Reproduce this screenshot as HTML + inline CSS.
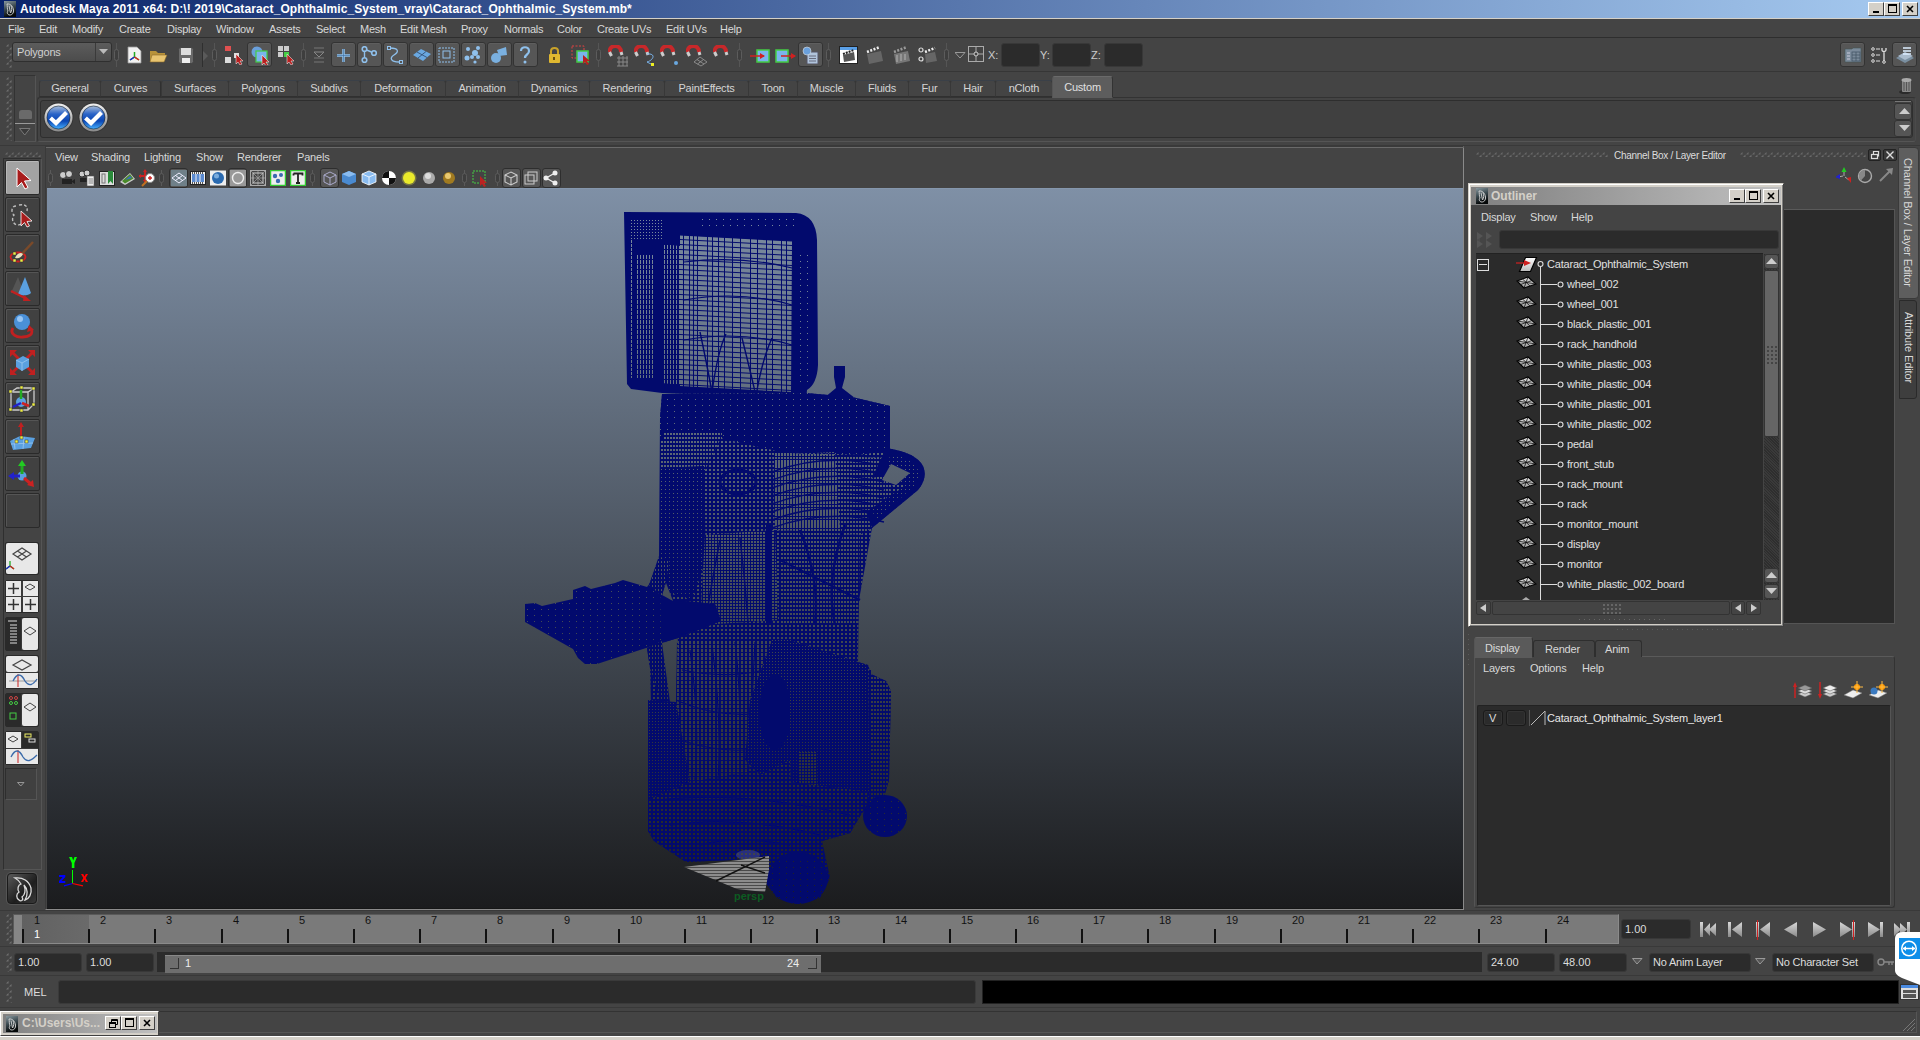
<!DOCTYPE html><html><head><meta charset="utf-8"><style>
html,body{margin:0;padding:0;width:1920px;height:1040px;overflow:hidden;background:#444;}
body{position:relative;font-family:"Liberation Sans",sans-serif;font-size:12px;color:#ddd;}
div{box-sizing:border-box;}
.t{position:absolute;white-space:nowrap;line-height:14px;}
</style></head><body>
<div style="position:absolute;left:0px;top:0px;width:1920px;height:18px;background:linear-gradient(90deg,#0a246a,#a6caf0);"></div>
<svg style="position:absolute;left:4px;top:1px" width="12" height="16" viewBox="0 0 12 16"><defs><linearGradient id="mi1" x1="0" y1="0" x2="0.3" y2="1"><stop offset="0" stop-color="#8a9aa0"/><stop offset="0.5" stop-color="#3c4a50"/><stop offset="1" stop-color="#050808"/></linearGradient></defs><rect width="12" height="16" fill="url(#mi1)"/><path d="M3 3 C6 2.5 9 5 9.5 9 C10 12 8 14 6 14 C3.5 14 2.5 11.5 4 10 C3 8 3.5 5 3 3 Z M5 4.5 L6.5 12 M7 4.5 C8 7 8 10 6.5 12" fill="none" stroke="#d8d8d8" stroke-width="0.9"/><path d="M5.5 11.5 L7.5 12.5 L6 13.5 Z" fill="#000"/></svg>
<div class="t" style="left:20px;top:2px;font-weight:bold;font-size:12px;color:#fff;line-height:14px;letter-spacing:0.1px;">Autodesk Maya 2011 x64: D:\! 2019\Cataract_Ophthalmic_System_vray\Cataract_Ophthalmic_System.mb*</div>
<div style="position:absolute;left:1868px;top:2px;width:16px;height:14px;background:#d4d0c8;border:1px solid;border-color:#fff #404040 #404040 #fff;"><div style="position:absolute;left:4px;top:8px;width:6px;height:2px;background:#000"></div></div>
<div style="position:absolute;left:1884px;top:2px;width:16px;height:14px;background:#d4d0c8;border:1px solid;border-color:#fff #404040 #404040 #fff;"><div style="position:absolute;left:3px;top:1px;width:9px;height:9px;border:1px solid #000;border-top-width:2px"></div></div>
<div style="position:absolute;left:1902px;top:2px;width:16px;height:14px;background:#d4d0c8;border:1px solid;border-color:#fff #404040 #404040 #fff;"><svg width="14" height="12" style="position:absolute;left:0;top:0"><path d="M4 3 L10 9 M10 3 L4 9" stroke="#000" stroke-width="1.6"/></svg></div>
<div style="position:absolute;left:0px;top:18px;width:1920px;height:1px;background:#d4d0c8;"></div>
<div style="position:absolute;left:0px;top:37px;width:1920px;height:1px;background:#2e2e2e;"></div>
<div class="t" style="left:8px;top:22px;color:#d8d8d8;font-size:11px;letter-spacing:-0.25px;">File</div>
<div class="t" style="left:39px;top:22px;color:#d8d8d8;font-size:11px;letter-spacing:-0.25px;">Edit</div>
<div class="t" style="left:72px;top:22px;color:#d8d8d8;font-size:11px;letter-spacing:-0.25px;">Modify</div>
<div class="t" style="left:119px;top:22px;color:#d8d8d8;font-size:11px;letter-spacing:-0.25px;">Create</div>
<div class="t" style="left:167px;top:22px;color:#d8d8d8;font-size:11px;letter-spacing:-0.25px;">Display</div>
<div class="t" style="left:216px;top:22px;color:#d8d8d8;font-size:11px;letter-spacing:-0.25px;">Window</div>
<div class="t" style="left:269px;top:22px;color:#d8d8d8;font-size:11px;letter-spacing:-0.25px;">Assets</div>
<div class="t" style="left:316px;top:22px;color:#d8d8d8;font-size:11px;letter-spacing:-0.25px;">Select</div>
<div class="t" style="left:360px;top:22px;color:#d8d8d8;font-size:11px;letter-spacing:-0.25px;">Mesh</div>
<div class="t" style="left:400px;top:22px;color:#d8d8d8;font-size:11px;letter-spacing:-0.25px;">Edit Mesh</div>
<div class="t" style="left:461px;top:22px;color:#d8d8d8;font-size:11px;letter-spacing:-0.25px;">Proxy</div>
<div class="t" style="left:504px;top:22px;color:#d8d8d8;font-size:11px;letter-spacing:-0.25px;">Normals</div>
<div class="t" style="left:557px;top:22px;color:#d8d8d8;font-size:11px;letter-spacing:-0.25px;">Color</div>
<div class="t" style="left:597px;top:22px;color:#d8d8d8;font-size:11px;letter-spacing:-0.25px;">Create UVs</div>
<div class="t" style="left:666px;top:22px;color:#d8d8d8;font-size:11px;letter-spacing:-0.25px;">Edit UVs</div>
<div class="t" style="left:720px;top:22px;color:#d8d8d8;font-size:11px;letter-spacing:-0.25px;">Help</div>
<svg style="position:absolute;left:6px;top:44px" width="6" height="24"><defs><pattern id="gp2" width="6" height="6" patternUnits="userSpaceOnUse"><path d="M2.5,0 V2.5 H0 Z" fill="#727272"/><path d="M5.5,3 V5.5 H3 Z" fill="#727272"/></pattern></defs><rect width="6" height="24" fill="url(#gp2)"/></svg>
<div style="position:absolute;left:12px;top:42px;width:100px;height:20px;background:linear-gradient(#5c5c5c,#4c4c4c);border:1px solid #2f2f2f;border-radius:3px;"></div>
<div style="position:absolute;left:95px;top:43px;width:1px;height:18px;background:#3a3a3a;"></div>
<div class="t" style="left:17px;top:45px;font-size:11px;color:#d0d0d0;letter-spacing:-0.2px;">Polygons</div>
<svg style="position:absolute;left:99px;top:48px;" width="10" height="8" viewBox="0 0 10 8"><path d="M0 1 L9 1 L4.5 6 Z" fill="#bbb"/></svg>
<div style="position:absolute;left:116px;top:43px;width:1px;height:24px;background:#2f2f2f;border-right:1px solid #555"></div>
<div style="position:absolute;left:114px;top:49px;width:5px;height:12px;border:1px solid #5c5c5c;border-radius:3px;background:#3e3e3e"></div>
<svg style="position:absolute;left:127px;top:46px;" width="15" height="18" viewBox="0 0 15 18"><path d="M1 1 H10 L14 5 V17 H1 Z" fill="#f2f2f2" stroke="#999" stroke-width="0.8"/><path d="M7.5 6 V11 M7.5 11 L3 14 M7.5 11 L12 14" stroke="#2a2" stroke-width="1.5"/><path d="M7.5 11 L3 14" stroke="#22c" stroke-width="1.5"/><path d="M7.5 11 L12 14" stroke="#d22" stroke-width="1.5"/></svg>
<svg style="position:absolute;left:149px;top:48px;" width="19" height="15" viewBox="0 0 19 15"><path d="M1 3 H7 L9 5 H16 V13 H1 Z" fill="#b8923a"/><path d="M3 7 H18 L15 14 H1 Z" fill="#e8c470" stroke="#8a6a2a" stroke-width="0.6"/></svg>
<svg style="position:absolute;left:178px;top:47px;" width="16" height="17" viewBox="0 0 16 17"><rect x="0.5" y="0.5" width="15" height="16" rx="2" fill="#6a6a6a" stroke="#444"/><rect x="3" y="1" width="10" height="7" fill="#ddd"/><rect x="4" y="11" width="8" height="5" fill="#eee"/></svg>
<div style="position:absolute;left:202px;top:43px;width:1px;height:24px;background:#2f2f2f"></div>
<svg style="position:absolute;left:203px;top:51px;" width="6" height="10" viewBox="0 0 6 10"><path d="M0 0 L5 5 L0 10 Z" fill="#5a5a5a"/></svg>
<div style="position:absolute;left:214px;top:43px;width:1px;height:24px;background:#2f2f2f;border-right:1px solid #555"></div>
<div style="position:absolute;left:212px;top:49px;width:5px;height:12px;border:1px solid #5c5c5c;border-radius:3px;background:#3e3e3e"></div>
<svg style="position:absolute;left:225px;top:46px;" width="19" height="19" viewBox="0 0 19 19"><rect x="0" y="0" width="6" height="5" fill="#e05050"/><rect x="0" y="11" width="6" height="6" fill="#ddd"/><rect x="9" y="7" width="5" height="5" fill="#ddd"/><path d="M11 8 L11 18 L13 16 L15 19 L17 18 L15 15 L18 15 Z" fill="#b82020" stroke="#fff" stroke-width="0.5"/></svg>
<div style="position:absolute;left:247px;top:42px;width:25px;height:25px;background:#565656;border:1px solid #333;border-radius:3px;box-shadow:inset 0 1px 0 #5e5e5e"></div>
<svg style="position:absolute;left:251px;top:46px;" width="19" height="19" viewBox="0 0 19 19"><circle cx="6" cy="6" r="5.5" fill="#6aa0dc"/><rect x="5" y="5" width="11" height="11" fill="#7ab4ec" stroke="#4c4" stroke-width="1.2"/><path d="M11 9 L11 19 L13 17 L15 20 L17 19 L15 16 L18 16 Z" fill="#b82020" stroke="#fff" stroke-width="0.5"/></svg>
<svg style="position:absolute;left:278px;top:46px;" width="18" height="19" viewBox="0 0 18 19"><rect x="0" y="0" width="5" height="5" fill="#ccc"/><rect x="6" y="0" width="5" height="5" fill="#ccc"/><rect x="0" y="6" width="5" height="5" fill="#ccc"/><rect x="6" y="6" width="5" height="5" fill="#4c4"/><path d="M9 8 L9 18 L11 16 L13 19 L15 18 L13 15 L16 15 Z" fill="#b82020" stroke="#fff" stroke-width="0.5"/></svg>
<div style="position:absolute;left:303px;top:43px;width:1px;height:24px;background:#2f2f2f;border-right:1px solid #555"></div>
<div style="position:absolute;left:301px;top:49px;width:5px;height:12px;border:1px solid #5c5c5c;border-radius:3px;background:#3e3e3e"></div>
<svg style="position:absolute;left:313px;top:46px;" width="12" height="18" viewBox="0 0 12 18"><path d="M1 2 H11 M1 16 H11 M1 12 H11" stroke="#777" stroke-width="1"/><path d="M1 6 L11 6 L6 11 Z" fill="none" stroke="#888"/></svg>
<div style="position:absolute;left:331px;top:42px;width:25px;height:25px;background:#565656;border:1px solid #333;border-radius:3px;box-shadow:inset 0 1px 0 #5e5e5e"></div>
<div style="position:absolute;left:357px;top:42px;width:25px;height:25px;background:#565656;border:1px solid #333;border-radius:3px;box-shadow:inset 0 1px 0 #5e5e5e"></div>
<div style="position:absolute;left:383px;top:42px;width:25px;height:25px;background:#565656;border:1px solid #333;border-radius:3px;box-shadow:inset 0 1px 0 #5e5e5e"></div>
<div style="position:absolute;left:409px;top:42px;width:25px;height:25px;background:#565656;border:1px solid #333;border-radius:3px;box-shadow:inset 0 1px 0 #5e5e5e"></div>
<div style="position:absolute;left:435px;top:42px;width:25px;height:25px;background:#565656;border:1px solid #333;border-radius:3px;box-shadow:inset 0 1px 0 #5e5e5e"></div>
<div style="position:absolute;left:461px;top:42px;width:25px;height:25px;background:#565656;border:1px solid #333;border-radius:3px;box-shadow:inset 0 1px 0 #5e5e5e"></div>
<div style="position:absolute;left:487px;top:42px;width:25px;height:25px;background:#565656;border:1px solid #333;border-radius:3px;box-shadow:inset 0 1px 0 #5e5e5e"></div>
<div style="position:absolute;left:513px;top:42px;width:25px;height:25px;background:#565656;border:1px solid #333;border-radius:3px;box-shadow:inset 0 1px 0 #5e5e5e"></div>
<svg style="position:absolute;left:335px;top:47px;" width="17" height="17" viewBox="0 0 17 17"><path d="M8.5 2 V15 M2 8.5 H15" stroke="#8fc0ec" stroke-width="2.5"/><path d="M8.5 2 V15 M2 8.5 H15" stroke="#3a6a9a" stroke-width="0.6"/></svg>
<svg style="position:absolute;left:361px;top:46px;" width="17" height="18" viewBox="0 0 17 18"><circle cx="3.5" cy="3" r="2.3" fill="none" stroke="#8fc0ec" stroke-width="1.6"/><circle cx="3.5" cy="14" r="2.3" fill="none" stroke="#8fc0ec" stroke-width="1.6"/><circle cx="13" cy="7" r="2.3" fill="none" stroke="#8fc0ec" stroke-width="1.6"/><path d="M3.5 5.5 V11.5 M5.5 4 L10.5 6" stroke="#8fc0ec" stroke-width="1.4"/></svg>
<svg style="position:absolute;left:387px;top:46px;" width="17" height="18" viewBox="0 0 17 18"><rect x="0.5" y="0.5" width="3" height="3" fill="none" stroke="#8fc0ec"/><rect x="12.5" y="14.5" width="3" height="3" fill="none" stroke="#8fc0ec"/><path d="M3 2 C12 2 12 6 7 9 C2 12 4 16 12 16" fill="none" stroke="#8fc0ec" stroke-width="1.3"/></svg>
<svg style="position:absolute;left:412px;top:48px;" width="20" height="14" viewBox="0 0 20 14"><path d="M1 7 L9 1 L19 6 L11 13 Z" fill="#6aa8e0"/><path d="M5 4 L15 9.5 M14 3.5 L6 10" stroke="#3a5a80" stroke-width="1"/></svg>
<svg style="position:absolute;left:438px;top:46px;" width="18" height="18" viewBox="0 0 18 18"><rect x="1" y="2" width="15" height="14" fill="none" stroke="#8fc0ec" stroke-dasharray="2 1"/><rect x="5" y="5" width="7" height="7" fill="none" stroke="#8fc0ec"/></svg>
<svg style="position:absolute;left:464px;top:46px;" width="18" height="18" viewBox="0 0 18 18"><circle cx="4" cy="3" r="2" fill="#8fc0ec"/><circle cx="14" cy="2" r="2" fill="#8fc0ec"/><circle cx="11" cy="7" r="3" fill="#8fc0ec"/><circle cx="3" cy="12" r="2.5" fill="#8fc0ec"/><circle cx="8" cy="11" r="2" fill="#8fc0ec"/><circle cx="14" cy="11" r="2" fill="#8fc0ec"/><circle cx="11" cy="16" r="1.6" fill="#8fc0ec"/></svg>
<svg style="position:absolute;left:490px;top:46px;" width="18" height="18" viewBox="0 0 18 18"><circle cx="6" cy="12" r="5" fill="#7ab0e0"/><path d="M7 4 L16 1 L17 9 L9 10 Z" fill="#7ab0e0"/></svg>
<svg style="position:absolute;left:519px;top:46px;" width="12" height="18" viewBox="0 0 12 18"><path d="M2 5 C2 0 10 0 10 5 C10 9 6 8 6 12" fill="none" stroke="#8fc0ec" stroke-width="2.2"/><circle cx="6" cy="16" r="1.5" fill="#8fc0ec"/></svg>
<svg style="position:absolute;left:548px;top:46px;" width="13" height="18" viewBox="0 0 13 18"><path d="M3 8 V5 C3 1 10 1 10 5 V8" fill="none" stroke="#c9a22a" stroke-width="2"/><rect x="1" y="8" width="11" height="9" rx="1" fill="#e0b830"/><rect x="5" y="11" width="2" height="3" fill="#6a5010"/></svg>
<svg style="position:absolute;left:571px;top:44px;" width="20" height="21" viewBox="0 0 20 21"><rect x="1" y="2" width="12" height="12" fill="none" stroke="#e04040" stroke-dasharray="2 1.5"/><rect x="6" y="7" width="11" height="11" fill="#7ab4ec" stroke="#4c4" stroke-width="1.5"/><path d="M12 11 L12 20 L14 18 L16 21 L18 20 L16 17 L19 17 Z" fill="#b82020"/></svg>
<div style="position:absolute;left:598px;top:43px;width:1px;height:24px;background:#2f2f2f;border-right:1px solid #555"></div>
<div style="position:absolute;left:596px;top:49px;width:5px;height:12px;border:1px solid #5c5c5c;border-radius:3px;background:#3e3e3e"></div>
<svg style="position:absolute;left:608px;top:45px;" width="21" height="22" viewBox="0 0 21 22"><path d="M1.5 7 C1.5 -1 13 -1 13 7" fill="none" stroke="#c8282a" stroke-width="4"/><path d="M1.5 7 L3.5 11 M13 7 L14 10" stroke="#ccc" stroke-width="3"/><path d="M9 13 H20 M9 17 H20 M9 21 H20 M11 11 V21 M15 11 V21 M19 11 V21" stroke="#888" stroke-width="1"/></svg>
<svg style="position:absolute;left:634px;top:45px;" width="21" height="22" viewBox="0 0 21 22"><path d="M1.5 7 C1.5 -1 13 -1 13 7" fill="none" stroke="#c8282a" stroke-width="4"/><path d="M1.5 7 L3.5 11 M13 7 L14 10" stroke="#ccc" stroke-width="3"/><path d="M13 9 C22 8 20 15 13 17 L19 20" fill="none" stroke="#7ab4ec" stroke-width="1"/><rect x="17" y="18" width="3" height="3" fill="#ee2"/></svg>
<svg style="position:absolute;left:660px;top:45px;" width="21" height="22" viewBox="0 0 21 22"><path d="M1.5 7 C1.5 -1 13 -1 13 7" fill="none" stroke="#c8282a" stroke-width="4"/><path d="M1.5 7 L3.5 11 M13 7 L14 10" stroke="#ccc" stroke-width="3"/><circle cx="16" cy="18" r="2" fill="#6aa8e0"/></svg>
<svg style="position:absolute;left:686px;top:45px;" width="21" height="22" viewBox="0 0 21 22"><path d="M1.5 7 C1.5 -1 13 -1 13 7" fill="none" stroke="#c8282a" stroke-width="4"/><path d="M1.5 7 L3.5 11 M13 7 L14 10" stroke="#ccc" stroke-width="3"/><path d="M8 17 L14 12 L21 17 L15 21 Z M11 14.5 L18 19 M17.5 14.5 L11.5 19" fill="none" stroke="#999" stroke-width="0.8"/></svg>
<svg style="position:absolute;left:713px;top:45px;" width="21" height="22" viewBox="0 0 21 22"><path d="M1.5 7 C1.5 -1 13 -1 13 7" fill="none" stroke="#c8282a" stroke-width="4"/><path d="M1.5 7 L3.5 11 M13 7 L14 10" stroke="#ccc" stroke-width="3"/></svg>
<div style="position:absolute;left:739px;top:43px;width:1px;height:24px;background:#2f2f2f;border-right:1px solid #555"></div>
<div style="position:absolute;left:737px;top:49px;width:5px;height:12px;border:1px solid #5c5c5c;border-radius:3px;background:#3e3e3e"></div>
<svg style="position:absolute;left:750px;top:49px;" width="20" height="14" viewBox="0 0 20 14"><rect x="7" y="1" width="12" height="12" fill="#7ab4ec" stroke="#4c4" stroke-width="1.5"/><path d="M0 7 H14" stroke="#d02020" stroke-width="1.5"/><path d="M10 4 L15 7 L10 10 Z" fill="#d02020"/></svg>
<svg style="position:absolute;left:775px;top:49px;" width="22" height="14" viewBox="0 0 22 14"><rect x="1" y="1" width="12" height="12" fill="#7ab4ec" stroke="#4c4" stroke-width="1.5"/><path d="M6 7 H20" stroke="#d02020" stroke-width="1.5"/><path d="M16 4 L21 7 L16 10 Z" fill="#d02020"/></svg>
<div style="position:absolute;left:798px;top:42px;width:25px;height:25px;background:#565656;border:1px solid #333;border-radius:3px;box-shadow:inset 0 1px 0 #5e5e5e"></div>
<svg style="position:absolute;left:802px;top:46px;" width="17" height="18" viewBox="0 0 17 18"><rect x="5" y="6" width="11" height="12" fill="#b0c4dc" stroke="#556"/><path d="M7 10 H14 M7 12.5 H14 M7 15 H14" stroke="#556" stroke-width="0.8"/><circle cx="5" cy="5" r="4" fill="#6aa0dc" stroke="#ddd" stroke-width="0.6"/></svg>
<div style="position:absolute;left:828px;top:43px;width:1px;height:24px;background:#2f2f2f;border-right:1px solid #555"></div>
<div style="position:absolute;left:826px;top:49px;width:5px;height:12px;border:1px solid #5c5c5c;border-radius:3px;background:#3e3e3e"></div>
<svg style="position:absolute;left:839px;top:46px;" width="19" height="18" viewBox="0 0 19 18"><rect x="0.5" y="0.5" width="18" height="17" fill="#fff" stroke="#222"/><rect x="1" y="1" width="17" height="3" fill="#5aa0e8"/><path d="M4 9 L15 6 L16 14 L5 16 Z" fill="#555"/><path d="M4 8 L15 4" stroke="#222" stroke-width="2" stroke-dasharray="2 1"/></svg>
<svg style="position:absolute;left:866px;top:45px;" width="18" height="20" viewBox="0 0 18 20"><path d="M1 9 L15 6 L17 16 L3 19 Z" fill="#666"/><path d="M1 7 L14 2" stroke="#eee" stroke-width="2.5" stroke-dasharray="2 1.5"/></svg>
<svg style="position:absolute;left:893px;top:45px;" width="18" height="20" viewBox="0 0 18 20"><path d="M1 9 L15 6 L17 16 L3 19 Z" fill="#777"/><path d="M1 7 L14 2" stroke="#999" stroke-width="2.5" stroke-dasharray="2 1.5"/><path d="M4 10 V17 M8 9 V16 M12 9 V15" stroke="#aaa" stroke-width="1.2"/></svg>
<svg style="position:absolute;left:918px;top:45px;" width="20" height="20" viewBox="0 0 20 20"><circle cx="3" cy="5" r="2" fill="none" stroke="#ddd" stroke-width="1.2"/><circle cx="3" cy="14" r="2" fill="none" stroke="#ddd" stroke-width="1.2"/><path d="M7 9 L17 7 L19 16 L8 18 Z" fill="#666"/><path d="M7 7 L17 3" stroke="#eee" stroke-width="2.5" stroke-dasharray="2 1.5"/></svg>
<div style="position:absolute;left:946px;top:43px;width:1px;height:24px;background:#2f2f2f;border-right:1px solid #555"></div>
<div style="position:absolute;left:944px;top:49px;width:5px;height:12px;border:1px solid #5c5c5c;border-radius:3px;background:#3e3e3e"></div>
<svg style="position:absolute;left:955px;top:52px;" width="11" height="7" viewBox="0 0 11 7"><path d="M0 0.5 H10 L5 6 Z" fill="none" stroke="#999"/></svg>
<svg style="position:absolute;left:968px;top:46px;" width="16" height="16" viewBox="0 0 16 16"><rect x="0.5" y="0.5" width="15" height="15" fill="none" stroke="#aaa"/><path d="M8 0 V16 M0 8 H16" stroke="#aaa"/><circle cx="8" cy="8" r="2" fill="#444" stroke="#ccc"/></svg>
<div class="t" style="left:988px;top:48px;font-size:11px;color:#ccc;">X:</div>
<div class="t" style="left:1040px;top:48px;font-size:11px;color:#ccc;">Y:</div>
<div class="t" style="left:1091px;top:48px;font-size:11px;color:#ccc;">Z:</div>
<div style="position:absolute;left:1001px;top:43px;width:39px;height:24px;background:#2b2b2b;border:1px solid #383838;border-radius:3px;"></div>
<div style="position:absolute;left:1052px;top:43px;width:39px;height:24px;background:#2b2b2b;border:1px solid #383838;border-radius:3px;"></div>
<div style="position:absolute;left:1104px;top:43px;width:39px;height:24px;background:#2b2b2b;border:1px solid #383838;border-radius:3px;"></div>
<div style="position:absolute;left:1840px;top:42px;width:25px;height:25px;background:#565656;border:1px solid #333;border-radius:3px;box-shadow:inset 0 1px 0 #5e5e5e"></div>
<svg style="position:absolute;left:1844px;top:47px;" width="18" height="16" viewBox="0 0 18 16"><path d="M1 2 H8 L9 1 H17 V15 H1 Z" fill="#7a8a9a" stroke="#455" stroke-width="0.6"/><path d="M3 6 H6 M3 9 H6 M3 12 H6" stroke="#ccd" stroke-width="1"/><rect x="8" y="5" width="8" height="9" fill="none" stroke="#456" stroke-width="0.8"/><path d="M12 5 V14 M8 8 H16 M8 11 H16" stroke="#456" stroke-width="0.8"/></svg>
<svg style="position:absolute;left:1871px;top:47px;" width="16" height="17" viewBox="0 0 16 17"><circle cx="2" cy="2" r="1.3" fill="none" stroke="#ddd"/><circle cx="2" cy="8" r="1.3" fill="none" stroke="#ddd"/><circle cx="2" cy="14" r="1.3" fill="none" stroke="#ddd"/><path d="M5 2 H9 M5 8 H9 M5 14 H9" stroke="#ddd"/><path d="M13 4 V14 M11 1 V3 C11 5 15 5 15 3 V1" fill="none" stroke="#ddd" stroke-width="1.3"/><circle cx="13" cy="15" r="1.3" fill="none" stroke="#ddd"/></svg>
<div style="position:absolute;left:1892px;top:42px;width:25px;height:25px;background:#565656;border:1px solid #333;border-radius:3px;box-shadow:inset 0 1px 0 #5e5e5e"></div>
<svg style="position:absolute;left:1895px;top:46px;" width="20" height="19" viewBox="0 0 20 19"><path d="M1 12 L10 17 L19 12 L10 7 Z" fill="#7a8fa0"/><path d="M3 10 L10 14 L18 10 L10 6 Z" fill="#aabbcc"/><path d="M8 2 H16 M8 5 H16 M8 8 H16" stroke="#ddeeff" stroke-width="1.5"/></svg>
<div style="position:absolute;left:0px;top:71px;width:1920px;height:1px;background:#363636;"></div>
<svg style="position:absolute;left:6px;top:77px" width="6" height="64"><defs><pattern id="gp3" width="6" height="6" patternUnits="userSpaceOnUse"><path d="M2.5,0 V2.5 H0 Z" fill="#727272"/><path d="M5.5,3 V5.5 H3 Z" fill="#727272"/></pattern></defs><rect width="6" height="64" fill="url(#gp3)"/></svg>
<div style="position:absolute;left:14px;top:75px;width:22px;height:67px;background:#444;border:1px solid;border-color:#333 #555 #555 #333;"></div>
<div style="position:absolute;left:19px;top:110px;width:13px;height:9px;background:#6a6a6a;border-radius:3px 3px 1px 1px;"></div>
<div style="position:absolute;left:15px;top:123px;width:20px;height:1px;background:#9a9a9a;"></div>
<svg style="position:absolute;left:19px;top:128px;" width="12" height="8" viewBox="0 0 12 8"><path d="M0.5 0.5 H11 L5.75 7 Z" fill="#3a3a3a" stroke="#7a7a7a"/></svg>
<div style="position:absolute;left:37px;top:97px;width:1879px;height:45px;background:#444;border:1px solid;border-color:#333 #4a4a4a #555 #333;border-radius:3px;"></div>
<div style="position:absolute;left:40px;top:100px;width:1873px;height:38px;background:#404040;border:1px solid #2e2e2e;border-radius:3px;"></div>
<div style="position:absolute;left:39px;top:80px;width:62px;height:17px;background:#444;border:1px solid;border-color:#3a4048 #303030 #303030 #383838;border-radius:3px 3px 0 0;"></div>
<div class="t" style="left:39px;top:81px;width:62px;text-align:center;font-size:11px;color:#d4d4d4;letter-spacing:-0.2px;">General</div>
<div style="position:absolute;left:100px;top:80px;width:61px;height:17px;background:#444;border:1px solid;border-color:#3a4048 #303030 #303030 #383838;border-radius:3px 3px 0 0;"></div>
<div class="t" style="left:100px;top:81px;width:61px;text-align:center;font-size:11px;color:#d4d4d4;letter-spacing:-0.2px;">Curves</div>
<div style="position:absolute;left:161px;top:80px;width:68px;height:17px;background:#444;border:1px solid;border-color:#3a4048 #303030 #303030 #383838;border-radius:3px 3px 0 0;"></div>
<div class="t" style="left:161px;top:81px;width:68px;text-align:center;font-size:11px;color:#d4d4d4;letter-spacing:-0.2px;">Surfaces</div>
<div style="position:absolute;left:228px;top:80px;width:70px;height:17px;background:#444;border:1px solid;border-color:#3a4048 #303030 #303030 #383838;border-radius:3px 3px 0 0;"></div>
<div class="t" style="left:228px;top:81px;width:70px;text-align:center;font-size:11px;color:#d4d4d4;letter-spacing:-0.2px;">Polygons</div>
<div style="position:absolute;left:297px;top:80px;width:64px;height:17px;background:#444;border:1px solid;border-color:#3a4048 #303030 #303030 #383838;border-radius:3px 3px 0 0;"></div>
<div class="t" style="left:297px;top:81px;width:64px;text-align:center;font-size:11px;color:#d4d4d4;letter-spacing:-0.2px;">Subdivs</div>
<div style="position:absolute;left:360px;top:80px;width:86px;height:17px;background:#444;border:1px solid;border-color:#3a4048 #303030 #303030 #383838;border-radius:3px 3px 0 0;"></div>
<div class="t" style="left:360px;top:81px;width:86px;text-align:center;font-size:11px;color:#d4d4d4;letter-spacing:-0.2px;">Deformation</div>
<div style="position:absolute;left:445px;top:80px;width:74px;height:17px;background:#444;border:1px solid;border-color:#3a4048 #303030 #303030 #383838;border-radius:3px 3px 0 0;"></div>
<div class="t" style="left:445px;top:81px;width:74px;text-align:center;font-size:11px;color:#d4d4d4;letter-spacing:-0.2px;">Animation</div>
<div style="position:absolute;left:518px;top:80px;width:72px;height:17px;background:#444;border:1px solid;border-color:#3a4048 #303030 #303030 #383838;border-radius:3px 3px 0 0;"></div>
<div class="t" style="left:518px;top:81px;width:72px;text-align:center;font-size:11px;color:#d4d4d4;letter-spacing:-0.2px;">Dynamics</div>
<div style="position:absolute;left:589px;top:80px;width:76px;height:17px;background:#444;border:1px solid;border-color:#3a4048 #303030 #303030 #383838;border-radius:3px 3px 0 0;"></div>
<div class="t" style="left:589px;top:81px;width:76px;text-align:center;font-size:11px;color:#d4d4d4;letter-spacing:-0.2px;">Rendering</div>
<div style="position:absolute;left:664px;top:80px;width:85px;height:17px;background:#444;border:1px solid;border-color:#3a4048 #303030 #303030 #383838;border-radius:3px 3px 0 0;"></div>
<div class="t" style="left:664px;top:81px;width:85px;text-align:center;font-size:11px;color:#d4d4d4;letter-spacing:-0.2px;">PaintEffects</div>
<div style="position:absolute;left:748px;top:80px;width:50px;height:17px;background:#444;border:1px solid;border-color:#3a4048 #303030 #303030 #383838;border-radius:3px 3px 0 0;"></div>
<div class="t" style="left:748px;top:81px;width:50px;text-align:center;font-size:11px;color:#d4d4d4;letter-spacing:-0.2px;">Toon</div>
<div style="position:absolute;left:797px;top:80px;width:59px;height:17px;background:#444;border:1px solid;border-color:#3a4048 #303030 #303030 #383838;border-radius:3px 3px 0 0;"></div>
<div class="t" style="left:797px;top:81px;width:59px;text-align:center;font-size:11px;color:#d4d4d4;letter-spacing:-0.2px;">Muscle</div>
<div style="position:absolute;left:855px;top:80px;width:54px;height:17px;background:#444;border:1px solid;border-color:#3a4048 #303030 #303030 #383838;border-radius:3px 3px 0 0;"></div>
<div class="t" style="left:855px;top:81px;width:54px;text-align:center;font-size:11px;color:#d4d4d4;letter-spacing:-0.2px;">Fluids</div>
<div style="position:absolute;left:908px;top:80px;width:43px;height:17px;background:#444;border:1px solid;border-color:#3a4048 #303030 #303030 #383838;border-radius:3px 3px 0 0;"></div>
<div class="t" style="left:908px;top:81px;width:43px;text-align:center;font-size:11px;color:#d4d4d4;letter-spacing:-0.2px;">Fur</div>
<div style="position:absolute;left:950px;top:80px;width:46px;height:17px;background:#444;border:1px solid;border-color:#3a4048 #303030 #303030 #383838;border-radius:3px 3px 0 0;"></div>
<div class="t" style="left:950px;top:81px;width:46px;text-align:center;font-size:11px;color:#d4d4d4;letter-spacing:-0.2px;">Hair</div>
<div style="position:absolute;left:995px;top:80px;width:58px;height:17px;background:#444;border:1px solid;border-color:#3a4048 #303030 #303030 #383838;border-radius:3px 3px 0 0;"></div>
<div class="t" style="left:995px;top:81px;width:58px;text-align:center;font-size:11px;color:#d4d4d4;letter-spacing:-0.2px;">nCloth</div>
<div style="position:absolute;left:1052px;top:76px;width:61px;height:22px;background:#5d5d5d;border:1px solid;border-color:#6a6a6a #333 #5d5d5d #555;border-radius:3px 3px 0 0;"></div>
<div class="t" style="left:1052px;top:80px;width:61px;text-align:center;font-size:11px;color:#e0e0e0;letter-spacing:-0.2px;">Custom</div>
<svg style="position:absolute;left:43px;top:102px;" width="32" height="32" viewBox="0 0 32 32"><defs><linearGradient id="cgl" x1="0" y1="0" x2="0" y2="1"><stop offset="0" stop-color="#a8bcd8"/><stop offset="0.35" stop-color="#2a64c8"/><stop offset="0.65" stop-color="#0a46b4"/><stop offset="1" stop-color="#48b0ff"/></linearGradient><linearGradient id="cgr" x1="0" y1="0" x2="0" y2="1"><stop offset="0" stop-color="#f0f0f0"/><stop offset="1" stop-color="#8a8a8a"/></linearGradient></defs><circle cx="15.5" cy="15.5" r="15" fill="#333"/><circle cx="15.5" cy="15.5" r="14" fill="url(#cgr)"/><circle cx="15.5" cy="15.5" r="11.5" fill="url(#cgl)" stroke="#123" stroke-width="0.6"/><path d="M7.5 16 L13 21 L23.5 10.5" fill="none" stroke="#fff" stroke-width="4.2" stroke-linejoin="miter"/></svg>
<svg style="position:absolute;left:78px;top:102px;" width="32" height="32" viewBox="0 0 32 32"><defs><linearGradient id="cgl" x1="0" y1="0" x2="0" y2="1"><stop offset="0" stop-color="#a8bcd8"/><stop offset="0.35" stop-color="#2a64c8"/><stop offset="0.65" stop-color="#0a46b4"/><stop offset="1" stop-color="#48b0ff"/></linearGradient><linearGradient id="cgr" x1="0" y1="0" x2="0" y2="1"><stop offset="0" stop-color="#f0f0f0"/><stop offset="1" stop-color="#8a8a8a"/></linearGradient></defs><circle cx="15.5" cy="15.5" r="15" fill="#333"/><circle cx="15.5" cy="15.5" r="14" fill="url(#cgr)"/><circle cx="15.5" cy="15.5" r="11.5" fill="url(#cgl)" stroke="#123" stroke-width="0.6"/><path d="M7.5 16 L13 21 L23.5 10.5" fill="none" stroke="#fff" stroke-width="4.2" stroke-linejoin="miter"/></svg>
<svg style="position:absolute;left:1896px;top:76px;" width="20" height="18" viewBox="0 0 20 18"><ellipse cx="9" cy="16" rx="6" ry="2" fill="#2a2a2a"/><rect x="6" y="4" width="9" height="12" rx="1" fill="#888"/><path d="M8 5 V15 M10.5 5 V15 M13 5 V15" stroke="#555" stroke-width="1"/><ellipse cx="10.5" cy="4" rx="5" ry="2" fill="#aaa"/></svg>
<div style="position:absolute;left:1894px;top:103px;width:18px;height:17px;background:#555;border:1px solid #333;border-radius:3px;"></div>
<svg style="position:absolute;left:1899px;top:108px;" width="11" height="7" viewBox="0 0 11 7"><path d="M0 6 L5.5 0 L11 6 Z" fill="#ccc"/></svg>
<div style="position:absolute;left:1894px;top:120px;width:18px;height:17px;background:#555;border:1px solid #333;border-radius:3px;"></div>
<svg style="position:absolute;left:1899px;top:125px;" width="11" height="7" viewBox="0 0 11 7"><path d="M0 0 L5.5 6 L11 0 Z" fill="#ccc"/></svg>
<div style="position:absolute;left:1895px;top:101px;width:16px;height:1px;background:#777;"></div>
<div style="position:absolute;left:0px;top:145px;width:1920px;height:1px;background:#393939;"></div>
<svg style="position:absolute;left:5px;top:152px" width="36" height="5"><defs><pattern id="gp4" width="6" height="5" patternUnits="userSpaceOnUse"><path d="M2.5,0 V2.5 H0 Z" fill="#6a6a6a"/><path d="M5.5,2.5 V5 H3 Z" fill="#6a6a6a"/></pattern></defs><rect width="36" height="5" fill="url(#gp4)"/></svg>
<div style="position:absolute;left:3px;top:158px;width:39px;height:712px;background:#444;border:1px solid;border-color:#2f2f2f #555 #555 #2f2f2f;"></div>
<div style="position:absolute;left:5px;top:160px;width:35px;height:35px;background:#a3a3a3;border:1px solid;border-color:#2a2a2a #2a2a2a #2a2a2a #2a2a2a;border-radius:2px;box-shadow:inset 1px 1px 0 #b8b8b8;"></div>
<svg style="position:absolute;left:5px;top:160px;" width="35" height="35" viewBox="0 0 35 35"><path d="M12 8 L12 27 L16.5 22.5 L20 29 L23 27.5 L19.5 21 L26 20.5 Z" fill="#a81c1c" stroke="#fff" stroke-width="1"/></svg>
<div style="position:absolute;left:5px;top:197px;width:35px;height:35px;background:#414141;border:1px solid;border-color:#2a2a2a #2a2a2a #2a2a2a #2a2a2a;border-radius:2px;box-shadow:inset 1px 1px 0 #555;"></div>
<svg style="position:absolute;left:5px;top:197px;" width="35" height="35" viewBox="0 0 35 35"><path d="M11 9 C6 9 6 16 9 18 C6 22 8 27 12 28 C16 28 18 26 18 26 M14 8 C20 7 23 9 22 14" fill="none" stroke="#bbb" stroke-width="1.4" stroke-dasharray="3 2"/><path d="M16 14 L16 29 L19.5 25.5 L22 30 L24.5 29 L22 24.5 L27 24 Z" fill="#a81c1c" stroke="#fff" stroke-width="0.8"/></svg>
<div style="position:absolute;left:5px;top:234px;width:35px;height:35px;background:#414141;border:1px solid;border-color:#2a2a2a #2a2a2a #2a2a2a #2a2a2a;border-radius:2px;box-shadow:inset 1px 1px 0 #555;"></div>
<svg style="position:absolute;left:5px;top:234px;" width="35" height="35" viewBox="0 0 35 35"><ellipse cx="13" cy="23" rx="7.5" ry="4.5" fill="none" stroke="#d02020" stroke-width="1.8"/><path d="M14 23 L28 8" stroke="#7a4a2a" stroke-width="2.5"/><path d="M10 24 C12 19 16 18 18 20 C16 24 13 25 10 24Z" fill="#e8e0c0"/><rect x="8" y="18" width="3" height="3" fill="#ee4" stroke="#333" stroke-width="0.5"/><rect x="8" y="25" width="3" height="3" fill="#ee4" stroke="#333" stroke-width="0.5"/><rect x="15" y="25" width="3" height="3" fill="#ee4" stroke="#333" stroke-width="0.5"/></svg>
<div style="position:absolute;left:5px;top:271px;width:35px;height:35px;background:#414141;border:1px solid;border-color:#2a2a2a #2a2a2a #2a2a2a #2a2a2a;border-radius:2px;box-shadow:inset 1px 1px 0 #555;"></div>
<svg style="position:absolute;left:5px;top:271px;" width="35" height="35" viewBox="0 0 35 35"><path d="M6 22 L13 6 L19 22 Z" fill="#555"/><path d="M13 23 L20 6 L26 22 C24 25 15 25 13 23Z" fill="#5aa0e0"/><path d="M6 20 L22 28" stroke="#c02020" stroke-width="2.5"/><path d="M19 24 L26 30 L18 30 Z" fill="#c02020"/></svg>
<div style="position:absolute;left:5px;top:308px;width:35px;height:35px;background:#414141;border:1px solid;border-color:#2a2a2a #2a2a2a #2a2a2a #2a2a2a;border-radius:2px;box-shadow:inset 1px 1px 0 #555;"></div>
<svg style="position:absolute;left:5px;top:308px;" width="35" height="35" viewBox="0 0 35 35"><circle cx="17" cy="14" r="8" fill="#4a90d8"/><circle cx="15" cy="11" r="3" fill="#b8dcff" opacity="0.7"/><path d="M8 20 C4 26 12 30 18 29 C24 29 29 26 26 21" fill="none" stroke="#c02020" stroke-width="2.8"/><path d="M24 17 L29 22 L22 24 Z" fill="#c02020"/></svg>
<div style="position:absolute;left:5px;top:345px;width:35px;height:35px;background:#414141;border:1px solid;border-color:#2a2a2a #2a2a2a #2a2a2a #2a2a2a;border-radius:2px;box-shadow:inset 1px 1px 0 #555;"></div>
<svg style="position:absolute;left:5px;top:345px;" width="35" height="35" viewBox="0 0 35 35"><path d="M6 6 L29 29 M29 6 L6 29" stroke="#c02020" stroke-width="2.8"/><path d="M5 5 L12 5 L5 12Z M30 5 L23 5 L30 12Z M5 30 L12 30 L5 23Z M30 30 L23 30 L30 23Z" fill="#c02020"/><path d="M11 15 L18 11 L24 14 L24 22 L17 26 L11 22 Z" fill="#5aa0e0"/><path d="M11 15 L17 18 L24 14 M17 18 V26" stroke="#9cc8f0" stroke-width="0.8" fill="none"/></svg>
<div style="position:absolute;left:5px;top:382px;width:35px;height:35px;background:#414141;border:1px solid;border-color:#2a2a2a #2a2a2a #2a2a2a #2a2a2a;border-radius:2px;box-shadow:inset 1px 1px 0 #555;"></div>
<svg style="position:absolute;left:5px;top:382px;" width="35" height="35" viewBox="0 0 35 35"><path d="M6 10 L12 6 L29 6 L29 22 L23 28 L6 28 Z M6 10 L23 10 L29 6 M23 10 V28" fill="none" stroke="#ccc" stroke-width="1.3"/><circle cx="16" cy="20" r="5" fill="#5aa0e0"/><path d="M16 17 V8" stroke="#2a2" stroke-width="2.5"/><path d="M16 21 L8 25" stroke="#22c" stroke-width="2.5"/><path d="M17 21 L24 24" stroke="#c22" stroke-width="2.5"/><g fill="#ee4" stroke="#333" stroke-width="0.5"><rect x="4" y="8" width="3" height="3"/><rect x="27" y="5" width="3" height="3"/><rect x="4" y="26" width="3" height="3"/><rect x="27" y="21" width="3" height="3"/><rect x="15" y="4" width="3" height="3"/><rect x="15" y="27" width="3" height="3"/></g></svg>
<div style="position:absolute;left:5px;top:419px;width:35px;height:35px;background:#414141;border:1px solid;border-color:#2a2a2a #2a2a2a #2a2a2a #2a2a2a;border-radius:2px;box-shadow:inset 1px 1px 0 #555;"></div>
<svg style="position:absolute;left:5px;top:419px;" width="35" height="35" viewBox="0 0 35 35"><path d="M5 22 L15 17 L30 19 L26 29 L8 31 Z" fill="#5aa0e0"/><path d="M9 20 L10 30 M19 18 L18 30 M6 25 L28 24" stroke="#9cc8f0" stroke-width="0.8"/><path d="M16 18 V6" stroke="#c02020" stroke-width="2"/><path d="M13 8 L16 3 L19 8 Z" fill="#c02020"/><g fill="#ee4" stroke="#333" stroke-width="0.5"><rect x="15" y="17" width="3" height="3"/><rect x="10" y="21" width="3" height="3"/><rect x="20" y="21" width="3" height="3"/></g></svg>
<div style="position:absolute;left:5px;top:456px;width:35px;height:35px;background:#414141;border:1px solid;border-color:#2a2a2a #2a2a2a #2a2a2a #2a2a2a;border-radius:2px;box-shadow:inset 1px 1px 0 #555;"></div>
<svg style="position:absolute;left:5px;top:456px;" width="35" height="35" viewBox="0 0 35 35"><circle cx="17" cy="20" r="4.5" fill="#5aa0e0"/><path d="M17 18 V8" stroke="#2a2" stroke-width="3"/><path d="M13 10 L17 4 L21 10Z" fill="#2c2"/><path d="M15 20 L7 20" stroke="#22c" stroke-width="3"/><path d="M9 16 L3 20 L9 24Z" fill="#22c"/><path d="M19 22 L26 28" stroke="#c22" stroke-width="3"/><path d="M22 29 L29 31 L28 24Z" fill="#c22"/></svg>
<div style="position:absolute;left:5px;top:493px;width:35px;height:35px;background:#414141;border:1px solid;border-color:#2a2a2a #2a2a2a #2a2a2a #2a2a2a;border-radius:2px;box-shadow:inset 1px 1px 0 #555;"></div>
<div style="position:absolute;left:5px;top:542px;width:34px;height:33px;background:#3a3a3a;border:1px solid #2a2a2a;border-radius:2px;"></div>
<svg style="position:absolute;left:5px;top:542px;" width="34" height="33" viewBox="0 0 34 33"><rect x="1" y="1" width="32" height="31" rx="2" fill="#e8e8e8"/><path d="M8 12 L17 6 L26 12 L17 18 Z M12.5 9 L21.5 15 M21.5 9 L12.5 15" fill="none" stroke="#444" stroke-width="1.2"/><path d="M5 24 V19 M5 24 L9 27 M5 24 L1 27" stroke="#2a2" stroke-width="1.3"/><path d="M5 24 L9 27" stroke="#c22" stroke-width="1.3"/><path d="M5 24 L1 27" stroke="#22c" stroke-width="1.3"/></svg>
<div style="position:absolute;left:5px;top:580px;width:34px;height:33px;background:#3a3a3a;border:1px solid #2a2a2a;border-radius:2px;"></div>
<svg style="position:absolute;left:5px;top:580px;" width="34" height="33" viewBox="0 0 34 33"><rect x="1" y="1" width="15" height="15" fill="#e8e8e8"/><rect x="18" y="1" width="15" height="15" fill="#e8e8e8"/><rect x="1" y="17" width="15" height="15" fill="#e8e8e8"/><rect x="18" y="17" width="15" height="15" fill="#e8e8e8"/><path d="M8.5 3 V14 M3 8.5 H14 M8.5 19 V30 M3 24.5 H14 M25.5 19 V30 M20 24.5 H31" stroke="#333" stroke-width="1.5"/><path d="M20 7 L25 4 L30 7 L25 10 Z" fill="none" stroke="#444"/></svg>
<div style="position:absolute;left:5px;top:617px;width:34px;height:34px;background:#3a3a3a;border:1px solid #2a2a2a;border-radius:2px;"></div>
<svg style="position:absolute;left:5px;top:617px;" width="34" height="34" viewBox="0 0 34 34"><rect x="1" y="1" width="15" height="32" fill="#2a2a2a"/><path d="M3 4 H12 M5 8 H12 M5 11 H12 M5 14 H12 M5 17 H12 M5 20 H12 M5 23 H12 M5 26 H12" stroke="#ddd" stroke-width="1"/><rect x="17" y="1" width="16" height="32" rx="2" fill="#e8e8e8"/><path d="M19 14 L25 10 L31 14 L25 18 Z" fill="none" stroke="#444"/></svg>
<div style="position:absolute;left:5px;top:655px;width:34px;height:34px;background:#3a3a3a;border:1px solid #2a2a2a;border-radius:2px;"></div>
<svg style="position:absolute;left:5px;top:655px;" width="34" height="34" viewBox="0 0 34 34"><rect x="1" y="1" width="32" height="16" rx="2" fill="#e8e8e8"/><path d="M8 10 L17 5 L26 10 L17 15 Z" fill="none" stroke="#444" stroke-width="1.2"/><rect x="1" y="18" width="32" height="15" fill="#e8e8e8"/><path d="M4 26 H32" stroke="#888" stroke-width="0.8"/><path d="M13 19 V32" stroke="#c22" stroke-width="1"/><path d="M8 26 C12 18 16 18 20 26 C24 32 28 30 32 24" fill="none" stroke="#3a6aaa" stroke-width="1.3"/></svg>
<div style="position:absolute;left:5px;top:693px;width:34px;height:34px;background:#3a3a3a;border:1px solid #2a2a2a;border-radius:2px;"></div>
<svg style="position:absolute;left:5px;top:693px;" width="34" height="34" viewBox="0 0 34 34"><rect x="1" y="1" width="15" height="32" fill="#2a2a2a"/><g fill="none" stroke="#c44"><circle cx="6" cy="5" r="1.5"/><circle cx="11" cy="5" r="1.5"/></g><g fill="none" stroke="#4c4"><circle cx="6" cy="10" r="1.5"/><circle cx="11" cy="10" r="1.5"/><rect x="5" y="20" width="6" height="6"/></g><rect x="17" y="1" width="16" height="32" rx="2" fill="#e8e8e8"/><path d="M19 14 L25 10 L31 14 L25 18 Z" fill="none" stroke="#444"/></svg>
<div style="position:absolute;left:5px;top:731px;width:34px;height:34px;background:#3a3a3a;border:1px solid #2a2a2a;border-radius:2px;"></div>
<svg style="position:absolute;left:5px;top:731px;" width="34" height="34" viewBox="0 0 34 34"><rect x="1" y="1" width="15" height="16" fill="#e8e8e8"/><path d="M3 8 L8 5 L13 8 L8 11 Z" fill="none" stroke="#444"/><rect x="17" y="1" width="16" height="16" fill="#2a2a2a"/><rect x="20" y="3" width="6" height="3" fill="none" stroke="#ee6"/><rect x="24" y="8" width="6" height="3" fill="none" stroke="#ddd"/><rect x="1" y="18" width="32" height="15" fill="#e8e8e8"/><path d="M13 19 V32" stroke="#c22"/><path d="M6 26 C10 18 14 18 18 26 C22 32 26 30 32 24" fill="none" stroke="#3a6aaa" stroke-width="1.3"/></svg>
<div style="position:absolute;left:5px;top:768px;width:32px;height:32px;background:#404040;border:1px solid;border-color:#2e2e2e #555 #555 #2e2e2e;"></div>
<svg style="position:absolute;left:17px;top:782px;" width="8" height="5" viewBox="0 0 8 5"><path d="M0.5 0.5 H7 L3.75 4 Z" fill="#444" stroke="#aaa" stroke-width="0.8"/></svg>
<div style="position:absolute;left:7px;top:873px;width:30px;height:31px;background:linear-gradient(135deg,#5a5a5a,#1e1e1e 60%,#3a3a3a);border:1px solid #1a1a1a;border-radius:4px;box-shadow:0 0 0 1px #555;"></div>
<svg style="position:absolute;left:7px;top:873px;" width="30" height="31" viewBox="0 0 30 31"><path d="M8 5 C16 4 22 8 24 15 C25 21 22 26 18 27 C21 22 21 16 17 12 C19 17 18 22 15 24 C17 27 14 29 12 27 C9 25 9 21 12 19 C10 16 11 12 14 11 C12 8 10 6 8 5 Z" fill="none" stroke="#ddd" stroke-width="1.3"/></svg>
<div style="position:absolute;left:45px;top:146px;width:1419px;height:764px;background:#444;border:1px solid;border-color:#3a3a3a #8a8a8a #8a8a8a #3a3a3a;"></div>
<div style="position:absolute;left:46px;top:147px;width:1418px;height:1px;background:#6a6a6a;"></div>
<div class="t" style="left:55px;top:150px;font-size:11px;color:#d8d8d8;letter-spacing:-0.2px;">View</div>
<div class="t" style="left:91px;top:150px;font-size:11px;color:#d8d8d8;letter-spacing:-0.2px;">Shading</div>
<div class="t" style="left:144px;top:150px;font-size:11px;color:#d8d8d8;letter-spacing:-0.2px;">Lighting</div>
<div class="t" style="left:196px;top:150px;font-size:11px;color:#d8d8d8;letter-spacing:-0.2px;">Show</div>
<div class="t" style="left:237px;top:150px;font-size:11px;color:#d8d8d8;letter-spacing:-0.2px;">Renderer</div>
<div class="t" style="left:297px;top:150px;font-size:11px;color:#d8d8d8;letter-spacing:-0.2px;">Panels</div>
<div style="position:absolute;left:50px;top:170px;width:1px;height:16px;background:#2c2c2c;border-right:1px solid #5a5a5a"></div>
<div style="position:absolute;left:48px;top:173px;width:5px;height:10px;border:1px solid #5a5a5a;border-radius:3px;background:#3e3e3e"></div>
<svg style="position:absolute;left:58px;top:169px;" width="18" height="18" viewBox="0 0 18 18"><circle cx="5" cy="6" r="3.5" fill="#ccc" stroke="#333"/><circle cx="11" cy="5" r="3.5" fill="#ccc" stroke="#333"/><path d="M4 10 H14 V15 H4 Z M14 12 L17 10 V15 L14 13" fill="#222"/></svg>
<svg style="position:absolute;left:78px;top:169px;" width="17" height="18" viewBox="0 0 17 18"><circle cx="4" cy="5" r="3" fill="#ccc" stroke="#333"/><circle cx="9" cy="4" r="3" fill="#ccc" stroke="#333"/><path d="M2 9 H9 V13 H2Z" fill="#222"/><rect x="9" y="7" width="7" height="10" fill="#eee" stroke="#555" stroke-width="0.6"/><path d="M10.5 10 H15 M10.5 12 H15 M10.5 14 H15" stroke="#555" stroke-width="0.7"/></svg>
<svg style="position:absolute;left:99px;top:170px;" width="16" height="16" viewBox="0 0 16 16"><rect x="0.5" y="1.5" width="15" height="14" fill="#ddd" stroke="#222"/><rect x="3" y="4" width="3" height="9" fill="none" stroke="#777"/><path d="M9 1 H14 V14 L11.5 11 L9 14 Z" fill="#2a8a3a"/></svg>
<svg style="position:absolute;left:119px;top:170px;" width="17" height="16" viewBox="0 0 17 16"><path d="M1 12 L11 3 L16 9 L6 15 Z" fill="#ccc"/><path d="M3 11 L11 4 L14.5 8.5 L6 13.5 Z" fill="#4a8a2a"/><path d="M6 10 L11 6 L13 8 Z" fill="#3a6ac0"/></svg>
<svg style="position:absolute;left:139px;top:169px;" width="17" height="18" viewBox="0 0 17 18"><path d="M6 1 V13 M0 7 H12" stroke="#c22" stroke-width="1.8"/><path d="M4 3 L6 0 L8 3 M4 11 L6 14 L8 11 M2 5 L-1 7 L2 9 M10 5 L13 7 L10 9" fill="#c22"/><circle cx="11" cy="9" r="4.5" fill="#fff" stroke="#888"/><path d="M11 7 V11 M9 9 H13" stroke="#c22" stroke-width="1.4"/><path d="M8 12 L3 17" stroke="#c07020" stroke-width="2"/></svg>
<div style="position:absolute;left:161px;top:170px;width:1px;height:16px;background:#2c2c2c;border-right:1px solid #5a5a5a"></div>
<div style="position:absolute;left:159px;top:173px;width:5px;height:10px;border:1px solid #5a5a5a;border-radius:3px;background:#3e3e3e"></div>
<div style="position:absolute;left:169px;top:168px;width:19px;height:20px;background:#565656;border:1px solid #2e2e2e;border-radius:3px"></div>
<svg style="position:absolute;left:171px;top:170px;" width="16" height="16" viewBox="0 0 16 16"><rect x="0" y="0" width="16" height="16" fill="#8ab" opacity="0.5"/><path d="M1 8 L8 3 L15 8 L8 13 Z M4.5 5.5 L11.5 10.5 M11.5 5.5 L4.5 10.5" fill="none" stroke="#eef" stroke-width="1"/></svg>
<svg style="position:absolute;left:190px;top:170px;" width="16" height="16" viewBox="0 0 16 16"><rect x="0.5" y="1.5" width="15" height="13" fill="#eee" stroke="#222"/><rect x="2" y="4" width="12" height="8" fill="#5a8ad0"/><path d="M2 3 H14 M2 13 H14" stroke="#222" stroke-width="1.4" stroke-dasharray="1 1"/><path d="M6 4 V12 M10 4 V12" stroke="#eee"/></svg>
<svg style="position:absolute;left:210px;top:170px;" width="16" height="16" viewBox="0 0 16 16"><rect x="0" y="0.5" width="16" height="15" fill="#eee"/><circle cx="8" cy="8" r="6" fill="#2a6ab0"/><circle cx="6.5" cy="6" r="2.5" fill="#9cc8f0" opacity="0.7"/></svg>
<div style="position:absolute;left:228px;top:168px;width:19px;height:20px;background:#565656;border:1px solid #2e2e2e;border-radius:3px"></div>
<svg style="position:absolute;left:230px;top:170px;" width="16" height="16" viewBox="0 0 16 16"><rect x="0" y="0" width="16" height="16" fill="#999"/><circle cx="8" cy="8" r="5.5" fill="none" stroke="#eee" stroke-width="1.4"/></svg>
<svg style="position:absolute;left:250px;top:170px;" width="16" height="16" viewBox="0 0 16 16"><rect x="0.5" y="0.5" width="15" height="15" fill="#444" stroke="#aaa"/><path d="M1 1 L15 15 M15 1 L1 15 M8 1 V15 M1 8 H15" stroke="#999" stroke-width="0.8"/><path d="M3 3 H13 V13 H3Z" fill="none" stroke="#ccc"/></svg>
<svg style="position:absolute;left:270px;top:170px;" width="16" height="16" viewBox="0 0 16 16"><rect x="0.5" y="0.5" width="15" height="15" fill="#eee" stroke="#3c3" stroke-width="1.5"/><circle cx="5" cy="6" r="2.2" fill="#3a6ab0"/><circle cx="11" cy="5" r="2" fill="#3a6ab0"/><circle cx="8" cy="11" r="2.2" fill="#3a6ab0"/></svg>
<svg style="position:absolute;left:290px;top:170px;" width="16" height="16" viewBox="0 0 16 16"><rect x="0.5" y="0.5" width="15" height="15" fill="#eee" stroke="#3c3" stroke-width="1.5"/><path d="M3.5 3.5 H12.5 V5.5 M3.5 3.5 V5.5 M8 3.5 V13 M6 13 H10" fill="none" stroke="#222" stroke-width="1.8"/></svg>
<div style="position:absolute;left:312px;top:170px;width:1px;height:16px;background:#2c2c2c;border-right:1px solid #5a5a5a"></div>
<div style="position:absolute;left:310px;top:173px;width:5px;height:10px;border:1px solid #5a5a5a;border-radius:3px;background:#3e3e3e"></div>
<div style="position:absolute;left:320px;top:168px;width:19px;height:20px;background:#565656;border:1px solid #2e2e2e;border-radius:3px"></div>
<svg style="position:absolute;left:322px;top:170px;" width="16" height="16" viewBox="0 0 16 16"><path d="M2 5 L8 2 L14 5 V12 L8 15 L2 12 Z M2 5 L8 8 L14 5 M8 8 V15" fill="none" stroke="#aac" stroke-width="1"/></svg>
<svg style="position:absolute;left:341px;top:170px;" width="16" height="16" viewBox="0 0 16 16"><path d="M1 4 L8 1 L15 4 V12 L8 15 L1 12 Z" fill="#4a8ad0"/><path d="M1 4 L8 7 L15 4 L8 1Z" fill="#8abcf0"/></svg>
<svg style="position:absolute;left:361px;top:170px;" width="16" height="16" viewBox="0 0 16 16"><path d="M1 4 L8 1 L15 4 V12 L8 15 L1 12 Z" fill="#8abcf0" stroke="#fff" stroke-width="0.8"/><path d="M1 4 L8 7 L15 4 M8 7 V15" fill="none" stroke="#fff" stroke-width="0.8"/></svg>
<svg style="position:absolute;left:381px;top:170px;" width="16" height="16" viewBox="0 0 16 16"><circle cx="8" cy="8" r="7" fill="#fff"/><path d="M1 8 A7 7 0 0 1 8 1 V8Z M8 8 H15 A7 7 0 0 1 8 15Z" fill="#111"/><path d="M4 4 H8 V8 H4Z M8 8 H12 V12 H8Z" fill="#111"/></svg>
<svg style="position:absolute;left:401px;top:170px;" width="16" height="16" viewBox="0 0 16 16"><circle cx="8" cy="8" r="6" fill="#e8e820"/><circle cx="8" cy="8" r="7.5" fill="#ee4" opacity="0.3"/></svg>
<svg style="position:absolute;left:421px;top:170px;" width="16" height="16" viewBox="0 0 16 16"><circle cx="8" cy="8" r="6" fill="#aaa"/><circle cx="7" cy="6" r="3" fill="#ddd"/></svg>
<svg style="position:absolute;left:441px;top:170px;" width="16" height="16" viewBox="0 0 16 16"><circle cx="8" cy="8" r="6" fill="#a07a20"/><circle cx="7" cy="6" r="3" fill="#e8c870"/></svg>
<div style="position:absolute;left:464px;top:170px;width:1px;height:16px;background:#2c2c2c;border-right:1px solid #5a5a5a"></div>
<div style="position:absolute;left:462px;top:173px;width:5px;height:10px;border:1px solid #5a5a5a;border-radius:3px;background:#3e3e3e"></div>
<svg style="position:absolute;left:472px;top:170px;" width="18" height="17" viewBox="0 0 18 17"><rect x="1" y="1" width="12" height="12" fill="none" stroke="#4c4" stroke-dasharray="2 1"/><path d="M8 6 V16 L10 14 L12 17 L14 16 L12 13 L15 13 Z" fill="#b22"/></svg>
<div style="position:absolute;left:497px;top:170px;width:1px;height:16px;background:#2c2c2c;border-right:1px solid #5a5a5a"></div>
<div style="position:absolute;left:495px;top:173px;width:5px;height:10px;border:1px solid #5a5a5a;border-radius:3px;background:#3e3e3e"></div>
<div style="position:absolute;left:502px;top:168px;width:19px;height:20px;background:#565656;border:1px solid #2e2e2e;border-radius:3px"></div>
<svg style="position:absolute;left:503px;top:170px;" width="16" height="16" viewBox="0 0 16 16"><path d="M2 5 L8 2 L14 5 V12 L8 15 L2 12 Z M2 5 L8 8 L14 5 M8 8 V15" fill="none" stroke="#ccc" stroke-width="1.1"/></svg>
<div style="position:absolute;left:522px;top:168px;width:19px;height:20px;background:#565656;border:1px solid #2e2e2e;border-radius:3px"></div>
<svg style="position:absolute;left:523px;top:170px;" width="16" height="16" viewBox="0 0 16 16"><rect x="2" y="5" width="9" height="9" fill="none" stroke="#ccc"/><rect x="5" y="2" width="9" height="9" fill="none" stroke="#ccc"/></svg>
<div style="position:absolute;left:542px;top:168px;width:19px;height:20px;background:#565656;border:1px solid #2e2e2e;border-radius:3px"></div>
<svg style="position:absolute;left:543px;top:170px;" width="16" height="16" viewBox="0 0 16 16"><circle cx="3" cy="8" r="2.5" fill="#eee"/><circle cx="12" cy="3" r="2.5" fill="#eee"/><circle cx="12" cy="13" r="2.5" fill="#eee"/><path d="M3 8 L12 3 M3 8 L12 13" stroke="#eee" stroke-width="1.4"/></svg>
<div style="position:absolute;left:47px;top:188px;width:1416px;height:721px;background:linear-gradient(#7f90a6 0%,#1b1c1e 99.8%,#131313 100%);"></div>
<div style="position:absolute;left:47px;top:188px;width:1416px;height:1px;background:#8597ad;"></div>
<div style="position:absolute;left:46px;top:909px;width:1418px;height:1px;background:#8a8a8a;"></div>
<svg style="position:absolute;left:55px;top:852px;" width="40" height="40" viewBox="0 0 40 40"><g transform="translate(-55,-852)"><path d="M72.5,870 V883.5" stroke="#0f0" stroke-width="1"/><path d="M72.5,883.5 L64,885.8" stroke="#00f" stroke-width="1.2"/><path d="M72.5,883.5 L83,885.8" stroke="#f00" stroke-width="1.2"/><path d="M69,857 h3 l1.2,3.5 l1.3,-3.5 h2.5 l-2.6,6 v5 h-2.6 v-5 Z" fill="#0f0"/><path d="M59,875 h6.3 v2 l-3.8,4 h3.8 v2 h-6.3 v-2 l3.8,-4 h-3.8 Z" fill="#00f"/><path d="M81,874 h2.2 l1.3,2.6 l1.3,-2.6 h2.2 l-2.3,4 l2.3,4 h-2.2 l-1.3,-2.6 l-1.3,2.6 h-2.2 l2.3,-4 Z" fill="#f00"/></g></svg>
<svg style="position:absolute;left:1476px;top:152px" width="132" height="5"><defs><pattern id="gp5" width="6" height="5" patternUnits="userSpaceOnUse"><path d="M2.5,0 V2.5 H0 Z" fill="#6a6a6a"/><path d="M5.5,2.5 V5 H3 Z" fill="#6a6a6a"/></pattern></defs><rect width="132" height="5" fill="url(#gp5)"/></svg>
<svg style="position:absolute;left:1740px;top:152px" width="126" height="5"><defs><pattern id="gp6" width="6" height="5" patternUnits="userSpaceOnUse"><path d="M2.5,0 V2.5 H0 Z" fill="#6a6a6a"/><path d="M5.5,2.5 V5 H3 Z" fill="#6a6a6a"/></pattern></defs><rect width="126" height="5" fill="url(#gp6)"/></svg>
<div class="t" style="left:1614px;top:149px;font-size:10px;color:#dcdcdc;letter-spacing:-0.3px;">Channel Box / Layer Editor</div>
<div style="position:absolute;left:1868px;top:149px;width:13px;height:12px;background:#3a3a3a;border:1px solid #222;border-radius:2px;"></div>
<svg style="position:absolute;left:1868px;top:149px;" width="13" height="12" viewBox="0 0 13 12"><rect x="3.5" y="5.5" width="6" height="4" fill="none" stroke="#ddd" stroke-width="1.2"/><path d="M5.5 5.5 V2.5 H10.5 V7 H9.5" fill="none" stroke="#ddd" stroke-width="1.2"/></svg>
<div style="position:absolute;left:1883px;top:149px;width:14px;height:12px;background:#3a3a3a;border:1px solid #222;border-radius:2px;"></div>
<svg style="position:absolute;left:1883px;top:149px;" width="14" height="12" viewBox="0 0 14 12"><path d="M3.5 2.5 L10.5 9.5 M10.5 2.5 L3.5 9.5" stroke="#ddd" stroke-width="1.4"/></svg>
<svg style="position:absolute;left:1836px;top:167px;" width="17" height="17" viewBox="0 0 17 17"><path d="M8 9 V3" stroke="#aaa"/><path d="M5.5 5 L8 0 L10.5 5Z" fill="#2c2"/><path d="M7 9 L2 10" stroke="#aaa"/><path d="M4 7 L-1 10 L4 12Z" fill="#22c"/><path d="M9 10 L13 13" stroke="#aaa"/><path d="M11 11 L15 16 L15 10Z" fill="#c22"/></svg>
<svg style="position:absolute;left:1857px;top:168px;" width="16" height="16" viewBox="0 0 16 16"><circle cx="8" cy="8" r="6.5" fill="#444" stroke="#aaa" stroke-width="1.4"/><path d="M8 2 A6 6 0 0 1 8 14 Z" fill="none"/><path d="M8 2 V8 L4 12.5 A6 6 0 0 1 8 2Z" fill="#888"/></svg>
<svg style="position:absolute;left:1878px;top:167px;" width="16" height="16" viewBox="0 0 16 16"><path d="M2 14 L13 3" stroke="#888" stroke-width="2"/><path d="M8 2 L15 1 L14 8Z" fill="#888"/></svg>
<div style="position:absolute;left:1898px;top:147px;width:21px;height:152px;background:#5e5e5e;border:1px solid #3a3a3a;border-radius:0 4px 4px 0;"></div>
<div class="t" style="left:1901px;top:158px;transform-origin:0 0;transform:rotate(90deg) translate(0,-14px);font-size:11px;color:#d8d8d8;letter-spacing:-0.1px;">Channel Box / Layer Editor</div>
<div style="position:absolute;left:1899px;top:300px;width:18px;height:99px;background:#3e3e3e;border:1px solid #2a2a2a;border-radius:0 3px 3px 0;"></div>
<div class="t" style="left:1902px;top:312px;transform-origin:0 0;transform:rotate(90deg) translate(0,-14px);font-size:11px;color:#d8d8d8;letter-spacing:-0.1px;">Attribute Editor</div>
<div style="position:absolute;left:1776px;top:209px;width:119px;height:415px;background:#2b2b2b;border:1px solid;border-color:#5a5a5a #555 #555 #2a2a2a;"></div>
<div style="position:absolute;left:1468px;top:183px;width:316px;height:444px;background:#d4d0c8;border:1px solid;border-color:#d4d0c8 #404040 #404040 #d4d0c8;box-shadow:inset 1px 1px 0 #fff, inset -1px -1px 0 #808080;"></div>
<div style="position:absolute;left:1471px;top:187px;width:310px;height:18px;background:linear-gradient(90deg,#808080,#c0c0c0);"></div>
<svg style="position:absolute;left:1476px;top:188px" width="12" height="16" viewBox="0 0 12 16"><defs><linearGradient id="mi7" x1="0" y1="0" x2="0.3" y2="1"><stop offset="0" stop-color="#8a9aa0"/><stop offset="0.5" stop-color="#3c4a50"/><stop offset="1" stop-color="#050808"/></linearGradient></defs><rect width="12" height="16" fill="url(#mi7)"/><path d="M3 3 C6 2.5 9 5 9.5 9 C10 12 8 14 6 14 C3.5 14 2.5 11.5 4 10 C3 8 3.5 5 3 3 Z M5 4.5 L6.5 12 M7 4.5 C8 7 8 10 6.5 12" fill="none" stroke="#d8d8d8" stroke-width="0.9"/><path d="M5.5 11.5 L7.5 12.5 L6 13.5 Z" fill="#000"/></svg>
<div class="t" style="left:1491px;top:189px;font-weight:bold;font-size:12px;color:#d4d0c8;">Outliner</div>
<div style="position:absolute;left:1729px;top:189px;width:16px;height:14px;background:#d4d0c8;border:1px solid;border-color:#fff #404040 #404040 #fff;"><div style="position:absolute;left:4px;top:8px;width:6px;height:2px;background:#000"></div></div>
<div style="position:absolute;left:1745px;top:189px;width:16px;height:14px;background:#d4d0c8;border:1px solid;border-color:#fff #404040 #404040 #fff;"><div style="position:absolute;left:3px;top:1px;width:9px;height:9px;border:1px solid #000;border-top-width:2px"></div></div>
<div style="position:absolute;left:1763px;top:189px;width:16px;height:14px;background:#d4d0c8;border:1px solid;border-color:#fff #404040 #404040 #fff;"><svg width="14" height="12" style="position:absolute;left:0;top:0"><path d="M4 3 L10 9 M10 3 L4 9" stroke="#000" stroke-width="1.6"/></svg></div>
<div style="position:absolute;left:1471px;top:205px;width:310px;height:419px;background:#444;"></div>
<div class="t" style="left:1481px;top:210px;font-size:11px;color:#d8d8d8;letter-spacing:-0.2px;">Display</div>
<div class="t" style="left:1530px;top:210px;font-size:11px;color:#d8d8d8;letter-spacing:-0.2px;">Show</div>
<div class="t" style="left:1571px;top:210px;font-size:11px;color:#d8d8d8;letter-spacing:-0.2px;">Help</div>
<svg style="position:absolute;left:1476px;top:231px;" width="18" height="18" viewBox="0 0 18 18"><path d="M1 1 L7 5 L1 9Z M10 1 L16 5 L10 9Z M1 9 L7 13 L1 17Z M10 9 L16 13 L10 17Z" fill="#555"/><path d="M3 7 V11" stroke="#555"/></svg>
<div style="position:absolute;left:1499px;top:230px;width:280px;height:19px;background:#2b2b2b;border:1px solid #383838;border-radius:3px;"></div>
<div style="position:absolute;left:1476px;top:253px;width:287px;height:347px;background:#2b2b2b;border-top:1px solid #222;"></div>
<div style="position:absolute;left:1477px;top:259px;width:12px;height:12px;border:1px solid #ddd;"></div>
<div style="position:absolute;left:1479px;top:264px;width:8px;height:1px;background:#ddd;"></div>
<svg style="position:absolute;left:1514px;top:255px;" width="24" height="18" viewBox="0 0 24 18"><defs><linearGradient id="tg" x1="0" y1="0" x2="0" y2="1"><stop offset="0" stop-color="#fff"/><stop offset="1" stop-color="#bbb"/></linearGradient></defs><path d="M11.5 2.5 H22.5 L16.5 16.5 H5.5 Z" fill="url(#tg)" stroke="#000" stroke-width="1.2"/><path d="M2 8 H13" stroke="#d02020" stroke-width="1.2"/><path d="M10 5 L17 8 L10 11Z" fill="#d02020"/></svg>
<svg style="position:absolute;left:1536px;top:260px;" width="9" height="9" viewBox="0 0 9 9"><circle cx="4.5" cy="4" r="2.5" fill="none" stroke="#ddd" stroke-width="1.1"/></svg>
<div class="t" style="left:1547px;top:257px;font-size:11px;color:#e0e0e0;letter-spacing:-0.2px;">Cataract_Ophthalmic_System</div>
<div style="position:absolute;left:1540px;top:267px;width:1px;height:333px;background:#ddd;"></div>
<svg style="position:absolute;left:1516px;top:273px;" width="21" height="17" viewBox="0 0 21 17"><defs><linearGradient id="mg" x1="0" y1="0" x2="0" y2="1"><stop offset="0" stop-color="#e8e8e8"/><stop offset="1" stop-color="#999"/></linearGradient></defs><path d="M1 8 L12 4 L20 11 L8 15 Z" fill="url(#mg)" stroke="#000" stroke-width="1.1"/><path d="M6.5 6 L14 13 M4.5 11.5 L16 7.5 M8 15 L12 4 M1 8 L20 11" fill="none" stroke="#111" stroke-width="0.8"/></svg>
<div style="position:absolute;left:1541px;top:284px;width:16px;height:1px;background:#ddd;"></div>
<svg style="position:absolute;left:1556px;top:280px;" width="9" height="9" viewBox="0 0 9 9"><circle cx="4.5" cy="4.5" r="2.5" fill="none" stroke="#ddd" stroke-width="1.1"/></svg>
<div class="t" style="left:1567px;top:277px;font-size:11px;color:#e0e0e0;letter-spacing:-0.2px;">wheel_002</div>
<svg style="position:absolute;left:1516px;top:293px;" width="21" height="17" viewBox="0 0 21 17"><defs><linearGradient id="mg" x1="0" y1="0" x2="0" y2="1"><stop offset="0" stop-color="#e8e8e8"/><stop offset="1" stop-color="#999"/></linearGradient></defs><path d="M1 8 L12 4 L20 11 L8 15 Z" fill="url(#mg)" stroke="#000" stroke-width="1.1"/><path d="M6.5 6 L14 13 M4.5 11.5 L16 7.5 M8 15 L12 4 M1 8 L20 11" fill="none" stroke="#111" stroke-width="0.8"/></svg>
<div style="position:absolute;left:1541px;top:304px;width:16px;height:1px;background:#ddd;"></div>
<svg style="position:absolute;left:1556px;top:300px;" width="9" height="9" viewBox="0 0 9 9"><circle cx="4.5" cy="4.5" r="2.5" fill="none" stroke="#ddd" stroke-width="1.1"/></svg>
<div class="t" style="left:1567px;top:297px;font-size:11px;color:#e0e0e0;letter-spacing:-0.2px;">wheel_001</div>
<svg style="position:absolute;left:1516px;top:313px;" width="21" height="17" viewBox="0 0 21 17"><defs><linearGradient id="mg" x1="0" y1="0" x2="0" y2="1"><stop offset="0" stop-color="#e8e8e8"/><stop offset="1" stop-color="#999"/></linearGradient></defs><path d="M1 8 L12 4 L20 11 L8 15 Z" fill="url(#mg)" stroke="#000" stroke-width="1.1"/><path d="M6.5 6 L14 13 M4.5 11.5 L16 7.5 M8 15 L12 4 M1 8 L20 11" fill="none" stroke="#111" stroke-width="0.8"/></svg>
<div style="position:absolute;left:1541px;top:324px;width:16px;height:1px;background:#ddd;"></div>
<svg style="position:absolute;left:1556px;top:320px;" width="9" height="9" viewBox="0 0 9 9"><circle cx="4.5" cy="4.5" r="2.5" fill="none" stroke="#ddd" stroke-width="1.1"/></svg>
<div class="t" style="left:1567px;top:317px;font-size:11px;color:#e0e0e0;letter-spacing:-0.2px;">black_plastic_001</div>
<svg style="position:absolute;left:1516px;top:333px;" width="21" height="17" viewBox="0 0 21 17"><defs><linearGradient id="mg" x1="0" y1="0" x2="0" y2="1"><stop offset="0" stop-color="#e8e8e8"/><stop offset="1" stop-color="#999"/></linearGradient></defs><path d="M1 8 L12 4 L20 11 L8 15 Z" fill="url(#mg)" stroke="#000" stroke-width="1.1"/><path d="M6.5 6 L14 13 M4.5 11.5 L16 7.5 M8 15 L12 4 M1 8 L20 11" fill="none" stroke="#111" stroke-width="0.8"/></svg>
<div style="position:absolute;left:1541px;top:344px;width:16px;height:1px;background:#ddd;"></div>
<svg style="position:absolute;left:1556px;top:340px;" width="9" height="9" viewBox="0 0 9 9"><circle cx="4.5" cy="4.5" r="2.5" fill="none" stroke="#ddd" stroke-width="1.1"/></svg>
<div class="t" style="left:1567px;top:337px;font-size:11px;color:#e0e0e0;letter-spacing:-0.2px;">rack_handhold</div>
<svg style="position:absolute;left:1516px;top:353px;" width="21" height="17" viewBox="0 0 21 17"><defs><linearGradient id="mg" x1="0" y1="0" x2="0" y2="1"><stop offset="0" stop-color="#e8e8e8"/><stop offset="1" stop-color="#999"/></linearGradient></defs><path d="M1 8 L12 4 L20 11 L8 15 Z" fill="url(#mg)" stroke="#000" stroke-width="1.1"/><path d="M6.5 6 L14 13 M4.5 11.5 L16 7.5 M8 15 L12 4 M1 8 L20 11" fill="none" stroke="#111" stroke-width="0.8"/></svg>
<div style="position:absolute;left:1541px;top:364px;width:16px;height:1px;background:#ddd;"></div>
<svg style="position:absolute;left:1556px;top:360px;" width="9" height="9" viewBox="0 0 9 9"><circle cx="4.5" cy="4.5" r="2.5" fill="none" stroke="#ddd" stroke-width="1.1"/></svg>
<div class="t" style="left:1567px;top:357px;font-size:11px;color:#e0e0e0;letter-spacing:-0.2px;">white_plastic_003</div>
<svg style="position:absolute;left:1516px;top:373px;" width="21" height="17" viewBox="0 0 21 17"><defs><linearGradient id="mg" x1="0" y1="0" x2="0" y2="1"><stop offset="0" stop-color="#e8e8e8"/><stop offset="1" stop-color="#999"/></linearGradient></defs><path d="M1 8 L12 4 L20 11 L8 15 Z" fill="url(#mg)" stroke="#000" stroke-width="1.1"/><path d="M6.5 6 L14 13 M4.5 11.5 L16 7.5 M8 15 L12 4 M1 8 L20 11" fill="none" stroke="#111" stroke-width="0.8"/></svg>
<div style="position:absolute;left:1541px;top:384px;width:16px;height:1px;background:#ddd;"></div>
<svg style="position:absolute;left:1556px;top:380px;" width="9" height="9" viewBox="0 0 9 9"><circle cx="4.5" cy="4.5" r="2.5" fill="none" stroke="#ddd" stroke-width="1.1"/></svg>
<div class="t" style="left:1567px;top:377px;font-size:11px;color:#e0e0e0;letter-spacing:-0.2px;">white_plastic_004</div>
<svg style="position:absolute;left:1516px;top:393px;" width="21" height="17" viewBox="0 0 21 17"><defs><linearGradient id="mg" x1="0" y1="0" x2="0" y2="1"><stop offset="0" stop-color="#e8e8e8"/><stop offset="1" stop-color="#999"/></linearGradient></defs><path d="M1 8 L12 4 L20 11 L8 15 Z" fill="url(#mg)" stroke="#000" stroke-width="1.1"/><path d="M6.5 6 L14 13 M4.5 11.5 L16 7.5 M8 15 L12 4 M1 8 L20 11" fill="none" stroke="#111" stroke-width="0.8"/></svg>
<div style="position:absolute;left:1541px;top:404px;width:16px;height:1px;background:#ddd;"></div>
<svg style="position:absolute;left:1556px;top:400px;" width="9" height="9" viewBox="0 0 9 9"><circle cx="4.5" cy="4.5" r="2.5" fill="none" stroke="#ddd" stroke-width="1.1"/></svg>
<div class="t" style="left:1567px;top:397px;font-size:11px;color:#e0e0e0;letter-spacing:-0.2px;">white_plastic_001</div>
<svg style="position:absolute;left:1516px;top:413px;" width="21" height="17" viewBox="0 0 21 17"><defs><linearGradient id="mg" x1="0" y1="0" x2="0" y2="1"><stop offset="0" stop-color="#e8e8e8"/><stop offset="1" stop-color="#999"/></linearGradient></defs><path d="M1 8 L12 4 L20 11 L8 15 Z" fill="url(#mg)" stroke="#000" stroke-width="1.1"/><path d="M6.5 6 L14 13 M4.5 11.5 L16 7.5 M8 15 L12 4 M1 8 L20 11" fill="none" stroke="#111" stroke-width="0.8"/></svg>
<div style="position:absolute;left:1541px;top:424px;width:16px;height:1px;background:#ddd;"></div>
<svg style="position:absolute;left:1556px;top:420px;" width="9" height="9" viewBox="0 0 9 9"><circle cx="4.5" cy="4.5" r="2.5" fill="none" stroke="#ddd" stroke-width="1.1"/></svg>
<div class="t" style="left:1567px;top:417px;font-size:11px;color:#e0e0e0;letter-spacing:-0.2px;">white_plastic_002</div>
<svg style="position:absolute;left:1516px;top:433px;" width="21" height="17" viewBox="0 0 21 17"><defs><linearGradient id="mg" x1="0" y1="0" x2="0" y2="1"><stop offset="0" stop-color="#e8e8e8"/><stop offset="1" stop-color="#999"/></linearGradient></defs><path d="M1 8 L12 4 L20 11 L8 15 Z" fill="url(#mg)" stroke="#000" stroke-width="1.1"/><path d="M6.5 6 L14 13 M4.5 11.5 L16 7.5 M8 15 L12 4 M1 8 L20 11" fill="none" stroke="#111" stroke-width="0.8"/></svg>
<div style="position:absolute;left:1541px;top:444px;width:16px;height:1px;background:#ddd;"></div>
<svg style="position:absolute;left:1556px;top:440px;" width="9" height="9" viewBox="0 0 9 9"><circle cx="4.5" cy="4.5" r="2.5" fill="none" stroke="#ddd" stroke-width="1.1"/></svg>
<div class="t" style="left:1567px;top:437px;font-size:11px;color:#e0e0e0;letter-spacing:-0.2px;">pedal</div>
<svg style="position:absolute;left:1516px;top:453px;" width="21" height="17" viewBox="0 0 21 17"><defs><linearGradient id="mg" x1="0" y1="0" x2="0" y2="1"><stop offset="0" stop-color="#e8e8e8"/><stop offset="1" stop-color="#999"/></linearGradient></defs><path d="M1 8 L12 4 L20 11 L8 15 Z" fill="url(#mg)" stroke="#000" stroke-width="1.1"/><path d="M6.5 6 L14 13 M4.5 11.5 L16 7.5 M8 15 L12 4 M1 8 L20 11" fill="none" stroke="#111" stroke-width="0.8"/></svg>
<div style="position:absolute;left:1541px;top:464px;width:16px;height:1px;background:#ddd;"></div>
<svg style="position:absolute;left:1556px;top:460px;" width="9" height="9" viewBox="0 0 9 9"><circle cx="4.5" cy="4.5" r="2.5" fill="none" stroke="#ddd" stroke-width="1.1"/></svg>
<div class="t" style="left:1567px;top:457px;font-size:11px;color:#e0e0e0;letter-spacing:-0.2px;">front_stub</div>
<svg style="position:absolute;left:1516px;top:473px;" width="21" height="17" viewBox="0 0 21 17"><defs><linearGradient id="mg" x1="0" y1="0" x2="0" y2="1"><stop offset="0" stop-color="#e8e8e8"/><stop offset="1" stop-color="#999"/></linearGradient></defs><path d="M1 8 L12 4 L20 11 L8 15 Z" fill="url(#mg)" stroke="#000" stroke-width="1.1"/><path d="M6.5 6 L14 13 M4.5 11.5 L16 7.5 M8 15 L12 4 M1 8 L20 11" fill="none" stroke="#111" stroke-width="0.8"/></svg>
<div style="position:absolute;left:1541px;top:484px;width:16px;height:1px;background:#ddd;"></div>
<svg style="position:absolute;left:1556px;top:480px;" width="9" height="9" viewBox="0 0 9 9"><circle cx="4.5" cy="4.5" r="2.5" fill="none" stroke="#ddd" stroke-width="1.1"/></svg>
<div class="t" style="left:1567px;top:477px;font-size:11px;color:#e0e0e0;letter-spacing:-0.2px;">rack_mount</div>
<svg style="position:absolute;left:1516px;top:493px;" width="21" height="17" viewBox="0 0 21 17"><defs><linearGradient id="mg" x1="0" y1="0" x2="0" y2="1"><stop offset="0" stop-color="#e8e8e8"/><stop offset="1" stop-color="#999"/></linearGradient></defs><path d="M1 8 L12 4 L20 11 L8 15 Z" fill="url(#mg)" stroke="#000" stroke-width="1.1"/><path d="M6.5 6 L14 13 M4.5 11.5 L16 7.5 M8 15 L12 4 M1 8 L20 11" fill="none" stroke="#111" stroke-width="0.8"/></svg>
<div style="position:absolute;left:1541px;top:504px;width:16px;height:1px;background:#ddd;"></div>
<svg style="position:absolute;left:1556px;top:500px;" width="9" height="9" viewBox="0 0 9 9"><circle cx="4.5" cy="4.5" r="2.5" fill="none" stroke="#ddd" stroke-width="1.1"/></svg>
<div class="t" style="left:1567px;top:497px;font-size:11px;color:#e0e0e0;letter-spacing:-0.2px;">rack</div>
<svg style="position:absolute;left:1516px;top:513px;" width="21" height="17" viewBox="0 0 21 17"><defs><linearGradient id="mg" x1="0" y1="0" x2="0" y2="1"><stop offset="0" stop-color="#e8e8e8"/><stop offset="1" stop-color="#999"/></linearGradient></defs><path d="M1 8 L12 4 L20 11 L8 15 Z" fill="url(#mg)" stroke="#000" stroke-width="1.1"/><path d="M6.5 6 L14 13 M4.5 11.5 L16 7.5 M8 15 L12 4 M1 8 L20 11" fill="none" stroke="#111" stroke-width="0.8"/></svg>
<div style="position:absolute;left:1541px;top:524px;width:16px;height:1px;background:#ddd;"></div>
<svg style="position:absolute;left:1556px;top:520px;" width="9" height="9" viewBox="0 0 9 9"><circle cx="4.5" cy="4.5" r="2.5" fill="none" stroke="#ddd" stroke-width="1.1"/></svg>
<div class="t" style="left:1567px;top:517px;font-size:11px;color:#e0e0e0;letter-spacing:-0.2px;">monitor_mount</div>
<svg style="position:absolute;left:1516px;top:533px;" width="21" height="17" viewBox="0 0 21 17"><defs><linearGradient id="mg" x1="0" y1="0" x2="0" y2="1"><stop offset="0" stop-color="#e8e8e8"/><stop offset="1" stop-color="#999"/></linearGradient></defs><path d="M1 8 L12 4 L20 11 L8 15 Z" fill="url(#mg)" stroke="#000" stroke-width="1.1"/><path d="M6.5 6 L14 13 M4.5 11.5 L16 7.5 M8 15 L12 4 M1 8 L20 11" fill="none" stroke="#111" stroke-width="0.8"/></svg>
<div style="position:absolute;left:1541px;top:544px;width:16px;height:1px;background:#ddd;"></div>
<svg style="position:absolute;left:1556px;top:540px;" width="9" height="9" viewBox="0 0 9 9"><circle cx="4.5" cy="4.5" r="2.5" fill="none" stroke="#ddd" stroke-width="1.1"/></svg>
<div class="t" style="left:1567px;top:537px;font-size:11px;color:#e0e0e0;letter-spacing:-0.2px;">display</div>
<svg style="position:absolute;left:1516px;top:553px;" width="21" height="17" viewBox="0 0 21 17"><defs><linearGradient id="mg" x1="0" y1="0" x2="0" y2="1"><stop offset="0" stop-color="#e8e8e8"/><stop offset="1" stop-color="#999"/></linearGradient></defs><path d="M1 8 L12 4 L20 11 L8 15 Z" fill="url(#mg)" stroke="#000" stroke-width="1.1"/><path d="M6.5 6 L14 13 M4.5 11.5 L16 7.5 M8 15 L12 4 M1 8 L20 11" fill="none" stroke="#111" stroke-width="0.8"/></svg>
<div style="position:absolute;left:1541px;top:564px;width:16px;height:1px;background:#ddd;"></div>
<svg style="position:absolute;left:1556px;top:560px;" width="9" height="9" viewBox="0 0 9 9"><circle cx="4.5" cy="4.5" r="2.5" fill="none" stroke="#ddd" stroke-width="1.1"/></svg>
<div class="t" style="left:1567px;top:557px;font-size:11px;color:#e0e0e0;letter-spacing:-0.2px;">monitor</div>
<svg style="position:absolute;left:1516px;top:573px;" width="21" height="17" viewBox="0 0 21 17"><defs><linearGradient id="mg" x1="0" y1="0" x2="0" y2="1"><stop offset="0" stop-color="#e8e8e8"/><stop offset="1" stop-color="#999"/></linearGradient></defs><path d="M1 8 L12 4 L20 11 L8 15 Z" fill="url(#mg)" stroke="#000" stroke-width="1.1"/><path d="M6.5 6 L14 13 M4.5 11.5 L16 7.5 M8 15 L12 4 M1 8 L20 11" fill="none" stroke="#111" stroke-width="0.8"/></svg>
<div style="position:absolute;left:1541px;top:584px;width:16px;height:1px;background:#ddd;"></div>
<svg style="position:absolute;left:1556px;top:580px;" width="9" height="9" viewBox="0 0 9 9"><circle cx="4.5" cy="4.5" r="2.5" fill="none" stroke="#ddd" stroke-width="1.1"/></svg>
<div class="t" style="left:1567px;top:577px;font-size:11px;color:#e0e0e0;letter-spacing:-0.2px;">white_plastic_002_board</div>
<svg style="position:absolute;left:1517px;top:597px;" width="20" height="3" viewBox="0 0 20 3"><path d="M5 3 L9 0 L13 3Z" fill="#aaa"/></svg>
<div style="position:absolute;left:1764px;top:254px;width:15px;height:346px;background:#3a3a3a;background-image:repeating-linear-gradient(45deg,#2e2e2e 0 1px,#3a3a3a 1px 2px);"></div>
<div style="position:absolute;left:1764px;top:254px;width:15px;height:15px;background:#555;border:1px solid #333;border-radius:3px;"></div>
<svg style="position:absolute;left:1766px;top:258px;" width="11" height="6" viewBox="0 0 11 6"><path d="M0 6 L5.5 0 L11 6Z" fill="#ccc"/></svg>
<div style="position:absolute;left:1764px;top:270px;width:15px;height:167px;background:#656565;border:1px solid #333;border-radius:2px;"></div>
<div style="position:absolute;left:1766px;top:345px;width:11px;height:19px;background-image:radial-gradient(circle,#444 0.9px,transparent 1px);background-size:4px 4px;"></div>
<div style="position:absolute;left:1764px;top:568px;width:15px;height:15px;background:#555;border:1px solid #333;border-radius:3px;"></div>
<svg style="position:absolute;left:1766px;top:572px;" width="11" height="6" viewBox="0 0 11 6"><path d="M0 6 L5.5 0 L11 6Z" fill="#ccc"/></svg>
<div style="position:absolute;left:1764px;top:584px;width:15px;height:15px;background:#555;border:1px solid #333;border-radius:3px;"></div>
<svg style="position:absolute;left:1766px;top:588px;" width="11" height="6" viewBox="0 0 11 6"><path d="M0 0 L5.5 6 L11 0Z" fill="#ccc"/></svg>
<div style="position:absolute;left:1476px;top:601px;width:15px;height:14px;background:#444;border:1px solid #333;border-radius:2px;"></div>
<svg style="position:absolute;left:1480px;top:604px;" width="6" height="8" viewBox="0 0 6 8"><path d="M6 0 L0 4 L6 8Z" fill="#ccc"/></svg>
<div style="position:absolute;left:1492px;top:601px;width:238px;height:14px;background:#444;border:1px solid #333;border-radius:2px;"></div>
<div style="position:absolute;left:1602px;top:603px;width:19px;height:11px;background-image:radial-gradient(circle,#666 0.8px,transparent 1px);background-size:4px 4px;"></div>
<div style="position:absolute;left:1731px;top:601px;width:14px;height:14px;background:#444;border:1px solid #333;border-radius:2px;"></div>
<svg style="position:absolute;left:1735px;top:604px;" width="6" height="8" viewBox="0 0 6 8"><path d="M6 0 L0 4 L6 8Z" fill="#ccc"/></svg>
<div style="position:absolute;left:1746px;top:601px;width:15px;height:14px;background:#444;border:1px solid #333;border-radius:2px;"></div>
<svg style="position:absolute;left:1751px;top:604px;" width="6" height="8" viewBox="0 0 6 8"><path d="M0 0 L6 4 L0 8Z" fill="#ccc"/></svg>
<div style="position:absolute;left:1577px;top:618px;width:90px;height:3px;background-image:radial-gradient(circle,#666 0.8px,transparent 1px);background-size:5px 3px;"></div>
<div style="position:absolute;left:1615px;top:628px;width:140px;height:3px;background-image:radial-gradient(circle,#5a5a5a 0.8px,transparent 1px);background-size:5px 3px;"></div>
<div style="position:absolute;left:1467px;top:632px;width:3px;height:36px;background-image:radial-gradient(circle,#5a5a5a 0.8px,transparent 1px);background-size:3px 5px;"></div>
<div style="position:absolute;left:1474px;top:656px;width:421px;height:252px;background:#444;border:1px solid;border-color:#5a5a5a #333 #333 #555;border-radius:3px;"></div>
<div style="position:absolute;left:1474px;top:637px;width:59px;height:21px;background:#5a5a5a;border:1px solid;border-color:#666 #333 #5a5a5a #555;border-radius:3px 3px 0 0;"></div>
<div class="t" style="left:1485px;top:641px;font-size:11px;color:#d8d8d8;letter-spacing:-0.2px;">Display</div>
<div style="position:absolute;left:1533px;top:640px;width:62px;height:17px;background:#444;border:1px solid #2e2e2e;border-bottom:none;border-radius:3px 3px 0 0;"></div>
<div class="t" style="left:1545px;top:642px;font-size:11px;color:#d8d8d8;letter-spacing:-0.2px;">Render</div>
<div style="position:absolute;left:1595px;top:640px;width:47px;height:17px;background:#444;border:1px solid #2e2e2e;border-bottom:none;border-radius:3px 3px 0 0;"></div>
<div class="t" style="left:1605px;top:642px;font-size:11px;color:#d8d8d8;letter-spacing:-0.2px;">Anim</div>
<div class="t" style="left:1483px;top:661px;font-size:11px;color:#d8d8d8;letter-spacing:-0.2px;">Layers</div>
<div class="t" style="left:1530px;top:661px;font-size:11px;color:#d8d8d8;letter-spacing:-0.2px;">Options</div>
<div class="t" style="left:1582px;top:661px;font-size:11px;color:#d8d8d8;letter-spacing:-0.2px;">Help</div>
<svg style="position:absolute;left:1793px;top:682px;" width="20" height="19" viewBox="0 0 20 19"><path d="M2 16 V3" stroke="#c22" stroke-width="1.5"/><path d="M0 5 L2 0 L4 5Z" fill="#c22"/><path d="M5 12 L12 9 L19 12 L12 15Z" fill="#ccc" stroke="#555" stroke-width="0.5"/><path d="M5 9 L12 6 L19 9 L12 12Z" fill="#ddd" stroke="#555" stroke-width="0.5"/><path d="M5 6 L12 3 L19 6 L12 9Z" fill="#999" stroke="#555" stroke-width="0.5"/></svg>
<svg style="position:absolute;left:1818px;top:682px;" width="20" height="19" viewBox="0 0 20 19"><path d="M2 0 V13" stroke="#c22" stroke-width="1.5"/><path d="M0 12 L2 17 L4 12Z" fill="#c22"/><path d="M5 12 L12 9 L19 12 L12 15Z" fill="#ccc" stroke="#555" stroke-width="0.5"/><path d="M5 9 L12 6 L19 9 L12 12Z" fill="#ddd" stroke="#555" stroke-width="0.5"/><path d="M5 6 L12 3 L19 6 L12 9Z" fill="#eee" stroke="#555" stroke-width="0.5"/></svg>
<svg style="position:absolute;left:1843px;top:681px;" width="20" height="20" viewBox="0 0 20 20"><path d="M1 14 L10 9 L19 12 L10 17Z" fill="#eee" stroke="#777" stroke-width="0.5"/><circle cx="14" cy="6" r="3" fill="#f90"/><path d="M14 0 V12 M8 6 H20" stroke="#fb4" stroke-width="1"/></svg>
<svg style="position:absolute;left:1868px;top:681px;" width="20" height="20" viewBox="0 0 20 20"><path d="M1 14 L10 9 L19 12 L10 17Z" fill="#eee" stroke="#777" stroke-width="0.5"/><circle cx="6" cy="10" r="3.5" fill="#3a7ac0"/><circle cx="14" cy="6" r="3" fill="#f90"/><path d="M14 0 V12 M8 6 H20" stroke="#fb4" stroke-width="1"/></svg>
<div style="position:absolute;left:1477px;top:705px;width:414px;height:201px;background:#2b2b2b;border:1px solid;border-color:#222 #555 #555 #222;border-radius:2px;"></div>
<div style="position:absolute;left:1483px;top:710px;width:20px;height:16px;background:#2b2b2b;border:1px solid #1a1a1a;border-radius:3px;box-shadow:inset 0 0 0 1px #333;"></div>
<div class="t" style="left:1489px;top:711px;font-size:11px;color:#ddd;">V</div>
<div style="position:absolute;left:1506px;top:710px;width:20px;height:16px;background:#2b2b2b;border:1px solid #1a1a1a;border-radius:3px;box-shadow:inset 0 0 0 1px #333;"></div>
<div style="position:absolute;left:1529px;top:710px;width:1px;height:16px;background:#555;"></div>
<svg style="position:absolute;left:1531px;top:710px;" width="15" height="16" viewBox="0 0 15 16"><path d="M0 15 L14 1 V15" fill="none" stroke="#bbb" stroke-width="1"/></svg>
<div class="t" style="left:1547px;top:711px;font-size:11px;color:#e8e8e8;letter-spacing:-0.2px;">Cataract_Ophthalmic_System_layer1</div>
<div style="position:absolute;left:0px;top:910px;width:1920px;height:126px;background:#444;"></div>
<div style="position:absolute;left:0px;top:910px;width:1920px;height:1px;background:#393939;"></div>
<svg style="position:absolute;left:6px;top:914px" width="6" height="30"><defs><pattern id="gp8" width="6" height="6" patternUnits="userSpaceOnUse"><path d="M2.5,0 V2.5 H0 Z" fill="#727272"/><path d="M5.5,3 V5.5 H3 Z" fill="#727272"/></pattern></defs><rect width="6" height="30" fill="url(#gp8)"/></svg>
<div style="position:absolute;left:13px;top:914px;width:1606px;height:30px;background:#7a7a7a;border:1px solid;border-color:#5a5a5a #8a8a8a #8a8a8a #5a5a5a;"></div>
<div style="position:absolute;left:14px;top:915px;width:8px;height:28px;background:#868686;"></div>
<div style="position:absolute;left:22px;top:915px;width:67px;height:28px;background:linear-gradient(90deg,#616161,#6a6a6a);"></div>
<div style="position:absolute;left:22px;top:929px;width:2px;height:14px;background:#111"></div>
<div style="position:absolute;left:88px;top:929px;width:2px;height:14px;background:#111"></div>
<div style="position:absolute;left:154px;top:929px;width:2px;height:14px;background:#111"></div>
<div style="position:absolute;left:221px;top:929px;width:2px;height:14px;background:#111"></div>
<div style="position:absolute;left:287px;top:929px;width:2px;height:14px;background:#111"></div>
<div style="position:absolute;left:353px;top:929px;width:2px;height:14px;background:#111"></div>
<div style="position:absolute;left:419px;top:929px;width:2px;height:14px;background:#111"></div>
<div style="position:absolute;left:485px;top:929px;width:2px;height:14px;background:#111"></div>
<div style="position:absolute;left:552px;top:929px;width:2px;height:14px;background:#111"></div>
<div style="position:absolute;left:618px;top:929px;width:2px;height:14px;background:#111"></div>
<div style="position:absolute;left:684px;top:929px;width:2px;height:14px;background:#111"></div>
<div style="position:absolute;left:750px;top:929px;width:2px;height:14px;background:#111"></div>
<div style="position:absolute;left:816px;top:929px;width:2px;height:14px;background:#111"></div>
<div style="position:absolute;left:883px;top:929px;width:2px;height:14px;background:#111"></div>
<div style="position:absolute;left:949px;top:929px;width:2px;height:14px;background:#111"></div>
<div style="position:absolute;left:1015px;top:929px;width:2px;height:14px;background:#111"></div>
<div style="position:absolute;left:1081px;top:929px;width:2px;height:14px;background:#111"></div>
<div style="position:absolute;left:1147px;top:929px;width:2px;height:14px;background:#111"></div>
<div style="position:absolute;left:1214px;top:929px;width:2px;height:14px;background:#111"></div>
<div style="position:absolute;left:1280px;top:929px;width:2px;height:14px;background:#111"></div>
<div style="position:absolute;left:1346px;top:929px;width:2px;height:14px;background:#111"></div>
<div style="position:absolute;left:1412px;top:929px;width:2px;height:14px;background:#111"></div>
<div style="position:absolute;left:1478px;top:929px;width:2px;height:14px;background:#111"></div>
<div style="position:absolute;left:1545px;top:929px;width:2px;height:14px;background:#111"></div>
<div class="t" style="left:34px;top:913px;font-size:11px;color:#111;letter-spacing:-0.2px;font-family:'Liberation Sans';">1</div>
<div class="t" style="left:100px;top:913px;font-size:11px;color:#111;letter-spacing:-0.2px;font-family:'Liberation Sans';">2</div>
<div class="t" style="left:166px;top:913px;font-size:11px;color:#111;letter-spacing:-0.2px;font-family:'Liberation Sans';">3</div>
<div class="t" style="left:233px;top:913px;font-size:11px;color:#111;letter-spacing:-0.2px;font-family:'Liberation Sans';">4</div>
<div class="t" style="left:299px;top:913px;font-size:11px;color:#111;letter-spacing:-0.2px;font-family:'Liberation Sans';">5</div>
<div class="t" style="left:365px;top:913px;font-size:11px;color:#111;letter-spacing:-0.2px;font-family:'Liberation Sans';">6</div>
<div class="t" style="left:431px;top:913px;font-size:11px;color:#111;letter-spacing:-0.2px;font-family:'Liberation Sans';">7</div>
<div class="t" style="left:497px;top:913px;font-size:11px;color:#111;letter-spacing:-0.2px;font-family:'Liberation Sans';">8</div>
<div class="t" style="left:564px;top:913px;font-size:11px;color:#111;letter-spacing:-0.2px;font-family:'Liberation Sans';">9</div>
<div class="t" style="left:630px;top:913px;font-size:11px;color:#111;letter-spacing:-0.2px;font-family:'Liberation Sans';">10</div>
<div class="t" style="left:696px;top:913px;font-size:11px;color:#111;letter-spacing:-0.2px;font-family:'Liberation Sans';">11</div>
<div class="t" style="left:762px;top:913px;font-size:11px;color:#111;letter-spacing:-0.2px;font-family:'Liberation Sans';">12</div>
<div class="t" style="left:828px;top:913px;font-size:11px;color:#111;letter-spacing:-0.2px;font-family:'Liberation Sans';">13</div>
<div class="t" style="left:895px;top:913px;font-size:11px;color:#111;letter-spacing:-0.2px;font-family:'Liberation Sans';">14</div>
<div class="t" style="left:961px;top:913px;font-size:11px;color:#111;letter-spacing:-0.2px;font-family:'Liberation Sans';">15</div>
<div class="t" style="left:1027px;top:913px;font-size:11px;color:#111;letter-spacing:-0.2px;font-family:'Liberation Sans';">16</div>
<div class="t" style="left:1093px;top:913px;font-size:11px;color:#111;letter-spacing:-0.2px;font-family:'Liberation Sans';">17</div>
<div class="t" style="left:1159px;top:913px;font-size:11px;color:#111;letter-spacing:-0.2px;font-family:'Liberation Sans';">18</div>
<div class="t" style="left:1226px;top:913px;font-size:11px;color:#111;letter-spacing:-0.2px;font-family:'Liberation Sans';">19</div>
<div class="t" style="left:1292px;top:913px;font-size:11px;color:#111;letter-spacing:-0.2px;font-family:'Liberation Sans';">20</div>
<div class="t" style="left:1358px;top:913px;font-size:11px;color:#111;letter-spacing:-0.2px;font-family:'Liberation Sans';">21</div>
<div class="t" style="left:1424px;top:913px;font-size:11px;color:#111;letter-spacing:-0.2px;font-family:'Liberation Sans';">22</div>
<div class="t" style="left:1490px;top:913px;font-size:11px;color:#111;letter-spacing:-0.2px;font-family:'Liberation Sans';">23</div>
<div class="t" style="left:1557px;top:913px;font-size:11px;color:#111;letter-spacing:-0.2px;font-family:'Liberation Sans';">24</div>
<div class="t" style="left:34px;top:927px;font-size:11px;color:#fff;">1</div>
<div style="position:absolute;left:1621px;top:919px;width:70px;height:20px;background:#2b2b2b;border:1px solid #383838;border-radius:3px;"></div>
<div class="t" style="left:1625px;top:922px;font-size:11px;color:#ddd;">1.00</div>
<svg style="position:absolute;left:1699px;top:920px;" width="20" height="20" viewBox="0 0 20 20"><defs><linearGradient id="pg" x1="0" x2="0" y1="0" y2="1"><stop offset="0" stop-color="#d8d8d8"/><stop offset="1" stop-color="#8a8a8a"/></linearGradient></defs><rect x="1" y="2" width="3" height="15" fill="url(#pg)"/><path d="M5 9.5 L11 3 V16Z M10 9.5 L17 3 V16Z" fill="url(#pg)"/></svg>
<svg style="position:absolute;left:1727px;top:920px;" width="20" height="20" viewBox="0 0 20 20"><rect x="1" y="2" width="3" height="15" fill="url(#pg)"/><path d="M5 9.5 L15 2 V17Z" fill="url(#pg)"/></svg>
<svg style="position:absolute;left:1755px;top:920px;" width="20" height="20" viewBox="0 0 20 20"><rect x="1" y="2" width="3" height="15" fill="url(#pg)"/><path d="M5 9.5 L15 2 V17Z" fill="url(#pg)"/><path d="M2.5 0 V20" stroke="#d02020" stroke-width="1"/></svg>
<svg style="position:absolute;left:1782px;top:920px;" width="20" height="20" viewBox="0 0 20 20"><path d="M2 9.5 L15 2 V17Z" fill="url(#pg)"/></svg>
<svg style="position:absolute;left:1810px;top:920px;" width="20" height="20" viewBox="0 0 20 20"><path d="M16 9.5 L3 2 V17Z" fill="url(#pg)"/></svg>
<svg style="position:absolute;left:1838px;top:920px;" width="20" height="20" viewBox="0 0 20 20"><path d="M14 9.5 L2 2 V17Z" fill="url(#pg)"/><rect x="14" y="2" width="3" height="15" fill="url(#pg)"/><path d="M15.5 0 V20" stroke="#d02020" stroke-width="1"/></svg>
<svg style="position:absolute;left:1866px;top:920px;" width="20" height="20" viewBox="0 0 20 20"><path d="M14 9.5 L2 2 V17Z" fill="url(#pg)"/><rect x="14" y="2" width="3" height="15" fill="url(#pg)"/></svg>
<svg style="position:absolute;left:1893px;top:920px;" width="20" height="20" viewBox="0 0 20 20"><path d="M1 3 L8 9.5 L1 16Z M7 3 L14 9.5 L7 16Z" fill="url(#pg)"/><rect x="14" y="2" width="3" height="15" fill="url(#pg)"/></svg>
<div style="position:absolute;left:0px;top:946px;width:1920px;height:1px;background:#393939;"></div>
<svg style="position:absolute;left:6px;top:953px" width="6" height="19"><defs><pattern id="gp9" width="6" height="6" patternUnits="userSpaceOnUse"><path d="M2.5,0 V2.5 H0 Z" fill="#727272"/><path d="M5.5,3 V5.5 H3 Z" fill="#727272"/></pattern></defs><rect width="6" height="19" fill="url(#gp9)"/></svg>
<div style="position:absolute;left:14px;top:953px;width:68px;height:19px;background:#2b2b2b;border:1px solid #383838;border-radius:3px;"></div>
<div class="t" style="left:18px;top:955px;font-size:11px;color:#ddd;">1.00</div>
<div style="position:absolute;left:86px;top:953px;width:68px;height:19px;background:#2b2b2b;border:1px solid #383838;border-radius:3px;"></div>
<div class="t" style="left:90px;top:955px;font-size:11px;color:#ddd;">1.00</div>
<div style="position:absolute;left:157px;top:952px;width:1325px;height:20px;background:#2b2b2b;"></div>
<div style="position:absolute;left:165px;top:955px;width:656px;height:18px;background:#6e6e6e;border-top:1px solid #888;"></div>
<div style="position:absolute;left:170px;top:958px;width:9px;height:11px;border-right:1px solid #333;border-bottom:1px solid #333;"></div>
<div class="t" style="left:185px;top:956px;font-size:11px;color:#eee;">1</div>
<div class="t" style="left:787px;top:956px;font-size:11px;color:#eee;">24</div>
<div style="position:absolute;left:808px;top:958px;width:9px;height:11px;border-right:1px solid #333;border-bottom:1px solid #333;"></div>
<div style="position:absolute;left:1487px;top:953px;width:68px;height:19px;background:#2b2b2b;border:1px solid #383838;border-radius:3px;"></div>
<div class="t" style="left:1491px;top:955px;font-size:11px;color:#ddd;">24.00</div>
<div style="position:absolute;left:1559px;top:953px;width:68px;height:19px;background:#2b2b2b;border:1px solid #383838;border-radius:3px;"></div>
<div class="t" style="left:1563px;top:955px;font-size:11px;color:#ddd;">48.00</div>
<svg style="position:absolute;left:1632px;top:958px;" width="11" height="7" viewBox="0 0 11 7"><path d="M0.5 0.5 H10 L5 6Z" fill="#555" stroke="#999"/></svg>
<div style="position:absolute;left:1649px;top:953px;width:102px;height:19px;background:#2b2b2b;border:1px solid #383838;border-radius:3px;"></div>
<div class="t" style="left:1653px;top:955px;font-size:11px;color:#ddd;letter-spacing:-0.2px;">No Anim Layer</div>
<svg style="position:absolute;left:1755px;top:958px;" width="11" height="7" viewBox="0 0 11 7"><path d="M0.5 0.5 H10 L5 6Z" fill="#555" stroke="#999"/></svg>
<div style="position:absolute;left:1772px;top:953px;width:102px;height:19px;background:#2b2b2b;border:1px solid #383838;border-radius:3px;"></div>
<div class="t" style="left:1776px;top:955px;font-size:11px;color:#ddd;letter-spacing:-0.2px;">No Character Set</div>
<svg style="position:absolute;left:1877px;top:957px;" width="18" height="10" viewBox="0 0 18 10"><circle cx="4" cy="5" r="3" fill="none" stroke="#888" stroke-width="1.4"/><path d="M7 5 H17 M12 5 V8 M15 5 V8" stroke="#888" stroke-width="1.4"/></svg>
<div style="position:absolute;left:0px;top:975px;width:1920px;height:1px;background:#393939;"></div>
<svg style="position:absolute;left:6px;top:981px" width="6" height="22"><defs><pattern id="gp10" width="6" height="6" patternUnits="userSpaceOnUse"><path d="M2.5,0 V2.5 H0 Z" fill="#727272"/><path d="M5.5,3 V5.5 H3 Z" fill="#727272"/></pattern></defs><rect width="6" height="22" fill="url(#gp10)"/></svg>
<div class="t" style="left:24px;top:985px;font-size:11px;color:#ddd;">MEL</div>
<div style="position:absolute;left:58px;top:980px;width:918px;height:24px;background:#2b2b2b;border:1px solid #3a3a3a;border-radius:3px;"></div>
<div style="position:absolute;left:982px;top:980px;width:917px;height:24px;background:#000;border:1px solid #222;"></div>
<svg style="position:absolute;left:1900px;top:984px;" width="19" height="16" viewBox="0 0 19 16"><rect x="0.5" y="0.5" width="18" height="15" fill="#ddd" stroke="#333"/><rect x="1" y="1" width="17" height="3" fill="#4a8ae0"/><rect x="3" y="6" width="13" height="3" fill="#555"/><rect x="3" y="10" width="13" height="4" fill="#555"/></svg>
<div style="position:absolute;left:0px;top:1007px;width:1920px;height:1px;background:#393939;"></div>
<div style="position:absolute;left:158px;top:1011px;width:1759px;height:22px;background:#444;border:1px solid;border-color:#333 #555 #555 #333;"></div>
<svg style="position:absolute;left:1900px;top:1016px;" width="16" height="16" viewBox="0 0 16 16"><path d="M15 3 L3 15 M15 7 L7 15 M15 11 L11 15" stroke="#777" stroke-width="1"/></svg>
<div style="position:absolute;left:0px;top:1011px;width:159px;height:25px;background:#d4d0c8;border:1px solid;border-color:#fff #404040 #404040 #fff;"></div>
<div style="position:absolute;left:3px;top:1014px;width:154px;height:19px;background:linear-gradient(90deg,#808080,#c0c0c0);"></div>
<svg style="position:absolute;left:6px;top:1016px" width="12" height="16" viewBox="0 0 12 16"><defs><linearGradient id="mi11" x1="0" y1="0" x2="0.3" y2="1"><stop offset="0" stop-color="#8a9aa0"/><stop offset="0.5" stop-color="#3c4a50"/><stop offset="1" stop-color="#050808"/></linearGradient></defs><rect width="12" height="16" fill="url(#mi11)"/><path d="M3 3 C6 2.5 9 5 9.5 9 C10 12 8 14 6 14 C3.5 14 2.5 11.5 4 10 C3 8 3.5 5 3 3 Z M5 4.5 L6.5 12 M7 4.5 C8 7 8 10 6.5 12" fill="none" stroke="#d8d8d8" stroke-width="0.9"/><path d="M5.5 11.5 L7.5 12.5 L6 13.5 Z" fill="#000"/></svg>
<div class="t" style="left:22px;top:1016px;font-weight:bold;font-size:12px;color:#d4d0c8;">C:\Users\Us...</div>
<div style="position:absolute;left:105px;top:1016px;width:16px;height:14px;background:#d4d0c8;border:1px solid;border-color:#fff #404040 #404040 #fff;"><svg width="14" height="12" style="position:absolute;left:0;top:0"><rect x="3.5" y="5.5" width="6" height="5" fill="none" stroke="#000" stroke-width="1"/><path d="M3.5 6.5 H9.5 M5.5 5.5 V2.5 H11.5 V7.5 H9.5 M5.5 3.5 H11.5" fill="none" stroke="#000" stroke-width="1"/></svg></div>
<div style="position:absolute;left:121px;top:1016px;width:16px;height:14px;background:#d4d0c8;border:1px solid;border-color:#fff #404040 #404040 #fff;"><div style="position:absolute;left:3px;top:1px;width:9px;height:9px;border:1px solid #000;border-top-width:2px"></div></div>
<div style="position:absolute;left:139px;top:1016px;width:16px;height:14px;background:#d4d0c8;border:1px solid;border-color:#fff #404040 #404040 #fff;"><svg width="14" height="12" style="position:absolute;left:0;top:0"><path d="M4 3 L10 9 M10 3 L4 9" stroke="#000" stroke-width="1.6"/></svg></div>
<div style="position:absolute;left:0px;top:1036px;width:1920px;height:4px;background:#d4d0c8;border-top:1px solid #fff;"></div>
<svg style="position:absolute;left:1893px;top:930px;" width="27" height="56" viewBox="0 0 27 56"><path d="M27 2 H10 C4 2 2 5 2 9 V40 C2 44 5 46 9 48 L27 55 Z" fill="#fff"/><rect x="6" y="8" width="21" height="21" fill="#0e8ee9"/><circle cx="16" cy="18.5" r="8" fill="#fff"/><circle cx="16" cy="18.5" r="6.5" fill="#0e8ee9"/><path d="M10 18.5 H22" stroke="#fff" stroke-width="1.5"/><path d="M10 18.5 L13 16 V21Z M22 18.5 L19 16 V21Z" fill="#fff"/></svg>
<svg style="position:absolute;left:500px;top:200px;" width="450" height="710" viewBox="0 0 450 710"><defs><pattern id="H94" width="4" height="4" patternUnits="userSpaceOnUse"><rect x="1" y="1" width="1" height="1" fill="#000"/></pattern><pattern id="H97" width="7" height="6" patternUnits="userSpaceOnUse"><rect x="2" y="3" width="1" height="1" fill="#000"/></pattern><pattern id="H89" width="3" height="3" patternUnits="userSpaceOnUse"><rect x="1" y="1" width="1" height="1" fill="#000"/></pattern><pattern id="H83" width="3" height="4" patternUnits="userSpaceOnUse"><rect x="1" y="1" width="1" height="2" fill="#000"/></pattern><pattern id="H75" width="4" height="4" patternUnits="userSpaceOnUse"><rect x="1" y="1" width="2" height="2" fill="#000"/></pattern><pattern id="H67" width="3" height="4" patternUnits="userSpaceOnUse"><rect x="1" y="1" width="2" height="2" fill="#000"/></pattern><pattern id="H56" width="3" height="3" patternUnits="userSpaceOnUse"><rect x="1" y="1" width="2" height="2" fill="#000"/></pattern><pattern id="H50" width="4" height="4" patternUnits="userSpaceOnUse"><rect x="1" y="1" width="2" height="3" fill="#000"/></pattern><pattern id="VS" width="3" height="5" patternUnits="userSpaceOnUse"><rect x="1" y="0" width="1" height="4" fill="#000"/></pattern><pattern id="VL" width="3" height="4" patternUnits="userSpaceOnUse"><rect x="1" y="0" width="1" height="3" fill="#000"/></pattern><pattern id="HL" width="4" height="3" patternUnits="userSpaceOnUse"><rect x="0" y="1" width="3" height="1" fill="#000"/></pattern><pattern id="pG" width="3" height="3" patternUnits="userSpaceOnUse"><rect width="3" height="3" fill="#8c8c8c"/><path d="M0 0.5 H3" stroke="#4a4a4a" stroke-width="1"/></pattern></defs><g transform="translate(-500,-200)"><mask id="mm" maskUnits="userSpaceOnUse" x="500" y="200" width="450" height="710"><path d="M624,212 L796,213 Q816,215 817,240 L818,365 Q817,384 807,390 L806,401 L790,398 L662,393 L631,389 L627,384 Z" fill="#fff"/><path d="M630,218 L662,218 L662,240 L630,240 Z" fill="url(#H89)"/><path d="M636,254 L653,254 L653,378 L636,378 Z" fill="url(#VS)"/><path d="M662,244 L680,246 L680,385 L662,383 Z" fill="url(#VS)"/><path d="M631,240 L634,240 L634,378 L631,378 Z" fill="url(#VL)"/><path d="M798,250 L812,250 L812,385 L798,385 Z" fill="url(#H97)"/><path d="M700,214 L800,214 L800,226 L700,226 Z" fill="url(#H97)"/><path d="M680,234 L792,240 L791,392 L680,386 Z" fill="#000"/><path d="M680,234.5 L792,240.5 M680,239.5 L792,245.5 M680,244.5 L792,250.5 M680,249.5 L792,255.5 M680,254.5 L792,260.5 M680,259.5 L792,265.5 M680,264.5 L792,270.5 M680,269.5 L792,275.5 M680,274.5 L792,280.5 M680,279.5 L792,285.5 M680,284.5 L792,290.5 M680,289.5 L792,295.5 M680,294.5 L792,300.5 M680,299.5 L792,305.5 M680,304.5 L792,310.5 M680,309.5 L792,315.5 M680,314.5 L792,320.5 M680,319.5 L792,325.5 M680,324.5 L792,330.5 M680,329.5 L792,335.5 M680,334.5 L792,340.5 M680,339.5 L792,345.5 M680,344.5 L792,350.5 M680,349.5 L792,355.5 M680,354.5 L792,360.5 M680,359.5 L792,365.5 M680,364.5 L792,370.5 M680,369.5 L792,375.5 M680,374.5 L792,380.5 M680,379.5 L792,385.5 M680,384.5 L792,390.5 M680,389.5 L792,395.5 M683.5,234 L683.5,394 M689.5,234 L689.5,394 M693.5,234 L693.5,394 M697.5,234 L697.5,394 M707.5,234 L707.5,394 M712.5,234 L712.5,394 M718.5,234 L718.5,394 M724.5,234 L724.5,394 M732.5,234 L732.5,394 M740.5,234 L740.5,394 M750.5,234 L750.5,394 M757.5,234 L757.5,394 M766.5,234 L766.5,394 M772.5,234 L772.5,394 M781.5,234 L781.5,394 M786.5,234 L786.5,394" fill="none" stroke="#fff" stroke-width="1"/><path d="M700,332 Q706,360 712,392 Q718,350 726,334 M742,338 Q750,370 756,396 Q762,360 772,338" fill="none" stroke="#fff" stroke-width="1.4"/><path d="M684,300 Q740,290 792,305 M684,340 Q740,330 792,345 M684,262 Q740,255 792,268" fill="none" stroke="#fff" stroke-width="1.2"/><path d="M680,234 L792,240" fill="none" stroke="#fff" stroke-width="3"/><ellipse cx="671" cy="405" rx="10" ry="11" fill="#fff"/><ellipse cx="671" cy="405" rx="8" ry="9" fill="url(#H75)"/><path d="M834,366 L845,366 L845,377 L842,388 L860,402 L818,403 L836,388 L834,377 Z" fill="#fff"/><path d="M660,418 L662,394 L806,393 L828,395 L852,397 L890,406 L886,448 Q915,452 923,466 Q928,478 918,490 L872,528 L859,600 L858,662 L868,665 L871,674 L886,681 L891,691 L889,780 L884,797 L870,805 L862,813 L850,833 L822,841 L830,878 L820,898 L798,904 L777,898 L765,882 L769,856 L731,860 L686,862 L654,841 L648,831 L648,793 L652,740 L650,668 L647,648 L661,643 L678,642 L674,601 L662,597 L666,583 L649,585 L659,558 Z" fill="#fff"/><path d="M660,418 L662,394 L806,393 L828,395 L852,397 L890,406 L886,448 Q915,452 923,466 Q928,478 918,490 L872,528 L859,600 L858,662 L868,665 L871,674 L886,681 L891,691 L889,780 L884,797 L870,805 L862,813 L850,833 L822,841 L830,878 L820,898 L798,904 L777,898 L765,882 L769,856 L731,860 L686,862 L654,841 L648,831 L648,793 L652,740 L650,668 L647,648 L661,643 L678,642 L674,601 L662,597 L666,583 L649,585 L659,558 Z" fill="url(#H75)"/><path d="M660,418 L662,394 L806,393 L852,397 L890,406 L890,450 L860,455 L780,452 L720,438 L680,434 L660,440 Z" fill="#fff"/><path d="M660,418 L662,394 L806,393 L852,397 L890,406 L890,450 L860,455 L780,452 L720,438 L680,434 L660,440 Z" fill="url(#H97)"/><path d="M664,432 L722,432 L722,470 L664,470 Z" fill="#fff"/><path d="M664,432 L722,432 L722,470 L664,470 Z" fill="url(#H67)"/><path d="M720,440 L772,450 L772,530 L705,540 L705,470 Z" fill="#fff"/><path d="M720,440 L772,450 L772,530 L705,540 L705,470 Z" fill="url(#H75)"/><path d="M720,482 A18,12 0 1,0 756,482 A18,12 0 1,0 720,482" fill="none" stroke="#fff" stroke-width="3"/><path d="M772,452 L880,458 L890,452 L900,470 L872,528 L860,535 L775,530 Z" fill="#fff"/><path d="M772,452 L880,458 L890,452 L900,470 L872,528 L860,535 L775,530 Z" fill="url(#H67)"/><path d="M775,455 L835,452 L840,530 L775,530 Z" fill="url(#H56)"/><path d="M772,472 Q825,452 884,466" fill="none" stroke="#fff" stroke-width="1.6"/><path d="M772,480 Q825,460 884,474" fill="none" stroke="#fff" stroke-width="1.6"/><path d="M772,488 Q825,468 884,482" fill="none" stroke="#fff" stroke-width="1.6"/><path d="M772,496 Q825,476 884,490" fill="none" stroke="#fff" stroke-width="1.6"/><path d="M772,504 Q825,484 884,498" fill="none" stroke="#fff" stroke-width="1.6"/><path d="M772,512 Q825,492 884,506" fill="none" stroke="#fff" stroke-width="1.6"/><path d="M772,520 Q825,500 884,514" fill="none" stroke="#fff" stroke-width="1.6"/><path d="M772,528 Q825,508 884,522" fill="none" stroke="#fff" stroke-width="1.6"/><path d="M660,468 L704,466 L706,560 L692,600 L660,590 Z" fill="#fff"/><path d="M660,468 L704,466 L706,560 L692,600 L660,590 Z" fill="url(#H94)"/><path d="M705,535 L775,530 L778,620 L700,625 Z" fill="#fff"/><path d="M705,535 L775,530 L778,620 L700,625 Z" fill="url(#H56)"/><path d="M720,540 Q712,580 705,625 M740,538 Q745,580 748,622" fill="none" stroke="#fff" stroke-width="1.5"/><path d="M780,530 L860,535 L859,600 L858,625 L780,625 Z" fill="#fff"/><path d="M780,530 L860,535 L859,600 L858,625 L780,625 Z" fill="url(#H67)"/><path d="M800,530 Q820,580 815,625 M845,525 Q825,580 835,625 M780,560 L860,600" fill="none" stroke="#fff" stroke-width="2.5"/><path d="M766,525 L771,525 L771,625 L766,625 Z" fill="#fff"/><path d="M770,640 L778,640 L778,700 L770,700 Z" fill="#fff"/><path d="M886,448 Q915,452 923,466 Q928,478 918,490 L872,528 L866,512 L905,486 L890,474 L872,478 Z" fill="#fff"/><path d="M890,454 Q912,458 918,470 Q920,480 912,488 L876,520 L872,510 L905,486 L888,470 Z" fill="url(#H94)"/><path d="M891,464 L910,473 L896,485 L882,480 Z" fill="#000"/><path d="M525,604 L535,603 L542,606 L573,599 L573,590 L585,586 L591,589 L615,583 L623,580 L647,587 L650,583 L660,580 L674,600 L715,604 L721,621 L678,638 L643,649 L597,664 L585,664 L578,658 L573,649 L525,622 Z" fill="#fff"/><path d="M525,604 L535,603 L542,606 L573,599 L573,590 L585,586 L591,589 L615,583 L623,580 L647,587 L650,583 L660,580 L674,600 L715,604 L721,621 L678,638 L643,649 L597,664 L585,664 L578,658 L573,649 L525,622 Z" fill="url(#H97)"/><path d="M660,580 L674,600 L715,604 L721,621 L678,638 L661,643 Z" fill="#fff"/><path d="M666,583 L673,601 L662,595 Z" fill="#000"/><path d="M659,556 L649,585 L662,596 L670,562 Z" fill="#fff"/><path d="M659,556 L649,585 L662,596 L670,562 Z" fill="url(#H83)"/><path d="M647,648 L662,641 L672,680 L678,705 L664,712 L650,668 Z" fill="#fff"/><path d="M647,648 L662,641 L672,680 L678,705 L664,712 L650,668 Z" fill="url(#H83)"/><path d="M662,643 L677,640 L676,702 L670,702 Z" fill="#000"/><path d="M678,640 L772,640 L772,690 L748,772 L690,782 L676,702 Z" fill="#fff"/><path d="M678,640 L772,640 L772,690 L748,772 L690,782 L676,702 Z" fill="url(#H50)"/><path d="M690,650 Q700,720 695,780 M712,645 Q722,720 718,780 M735,642 Q742,700 740,775 M755,642 L752,700" fill="none" stroke="#fff" stroke-width="1.2"/><path d="M676,700 Q720,720 772,712 M680,740 Q725,755 760,748 M682,670 Q730,680 772,668" fill="none" stroke="#fff" stroke-width="1.2"/><path d="M772,640 L790,640 L800,700 L790,760 L760,775 L745,760 L750,700 Z" fill="#fff"/><path d="M772,640 L790,640 L800,700 L790,760 L760,775 L745,760 L750,700 Z" fill="url(#H89)"/><ellipse cx="775" cy="712" rx="16" ry="38" fill="#fff"/><path d="M790,640 L858,662 L868,665 L870,795 L850,833 L792,822 L790,760 Z" fill="#fff"/><path d="M790,640 L858,662 L868,665 L870,795 L850,833 L792,822 L790,760 Z" fill="url(#H89)"/><path d="M798,752 L816,752 L818,792 L800,792 Z" fill="url(#H56)"/><path d="M868,665 L871,674 L886,681 L891,691 L889,780 L884,797 L870,800 Z" fill="#fff"/><path d="M868,665 L871,674 L886,681 L891,691 L889,780 L884,797 L870,800 Z" fill="url(#H67)"/><path d="M870,670 L870,800" fill="none" stroke="#fff" stroke-width="2"/><path d="M648,782 L700,780 L790,782 L870,792 L862,813 L850,833 L822,841 L769,856 L731,860 L686,862 L654,841 L648,831 Z" fill="#fff"/><path d="M648,782 L700,780 L790,782 L870,792 L862,813 L850,833 L822,841 L769,856 L731,860 L686,862 L654,841 L648,831 Z" fill="url(#H75)"/><path d="M660,800 Q740,790 850,815 M670,825 Q740,815 820,835 M700,845 Q740,835 790,845" fill="none" stroke="#fff" stroke-width="1.5"/><path d="M648,700 L676,702 L690,782 L648,800 Z" fill="#fff"/><path d="M648,700 L676,702 L690,782 L648,800 Z" fill="url(#H89)"/><ellipse cx="885" cy="816" rx="22" ry="21" fill="#fff"/><path d="M866,800 L906,800 L906,836 L866,836 Z" fill="url(#H97)"/><ellipse cx="798" cy="878" rx="30" ry="26" fill="#fff"/><path d="M770,856 L830,856 L830,905 L770,905 Z" fill="url(#H97)"/></mask><rect x="500" y="200" width="450" height="710" fill="#020a6d" mask="url(#mm)"/><path d="M684,867 L769,856 L769,870 L765,892 L737,889 Z" fill="url(#pG)"/><path d="M716,881 L765,857 M741,865 L765,873" stroke="#111" stroke-width="1.5"/><ellipse cx="748" cy="855" rx="12" ry="5" fill="#9aa0b0" opacity="0.25"/><text x="734" y="900" font-family="Liberation Sans" font-size="11" font-weight="bold" fill="#0c5c22">persp</text></g></svg>
</body></html>
